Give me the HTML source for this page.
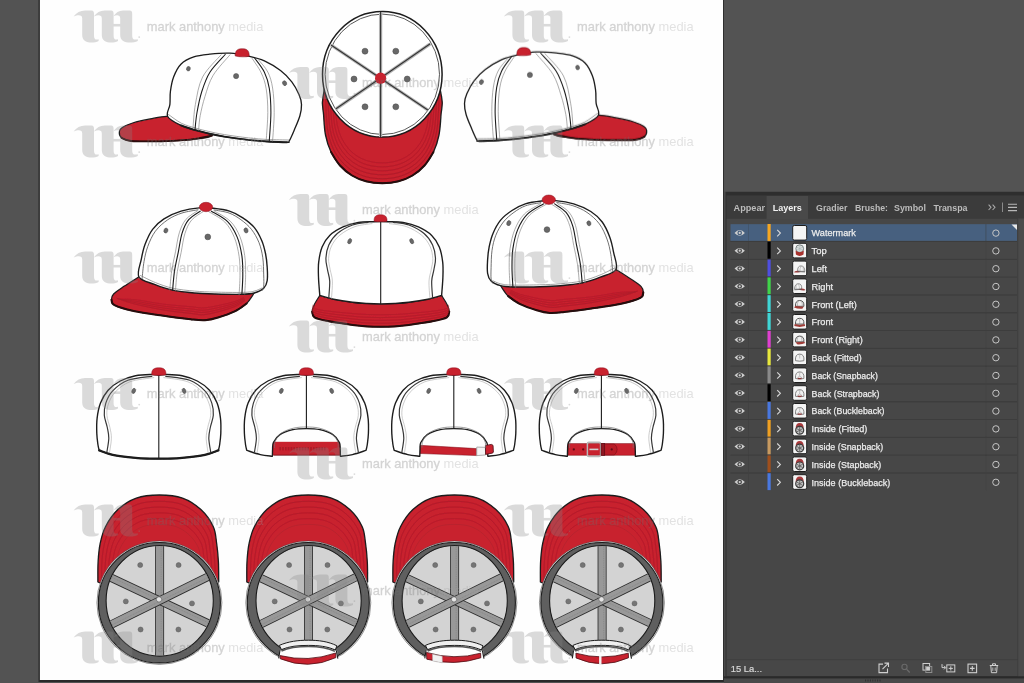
<!DOCTYPE html><html><head><meta charset="utf-8"><title>Hat template</title><style>html,body{margin:0;padding:0;}body{width:1024px;height:683px;overflow:hidden;background:#535353;position:relative;font-family:"Liberation Sans",sans-serif;}#art{position:absolute;left:40px;top:0;width:682.8px;height:680.3px;background:#fefefe;}#artb{position:absolute;left:39px;top:680px;width:685.5px;height:1.6px;background:#2a2a2a;}#artr{position:absolute;left:722.6px;top:0;width:1.6px;height:681.5px;background:#2e2e2e;}#artl{position:absolute;left:38.4px;top:0;width:1.7px;height:681.5px;background:#3d3d3d;}</style></head><body><div id="artl"></div><div id="art"></div><div id="artb"></div><div id="artr"></div><svg width="1024" height="683" viewBox="0 0 1024 683" style="position:absolute;left:0;top:0"><defs><g id="malogo" fill="#888888" transform="translate(0,0.7)"><path d="M-1.2,-10.2 C1.8,-14.5 6.4,-16.6 11.4,-16.2 L16.7,-16.2 C18.7,-16.2 19.2,-15 19.2,-12.5 L19.2,8.5 C19.2,12.3 20.5,13.6 23.8,12.6 L23.8,14.3 C18.2,17.2 7.4,16.6 7.4,8.5 L7.4,-8.5 C7.4,-12 3.4,-12 -1.2,-10.2 Z"/><path d="M19.0,-10.2 C22.0,-14.5 26.0,-16.6 31.0,-16.2 L36.3,-16.2 C38.3,-16.2 38.8,-15 38.8,-12.5 L38.8,8.5 C38.8,12.3 40.1,13.6 43.2,12.6 L43.2,14.3 C37.8,17.2 27.0,16.6 27.0,8.5 L27.0,-8.5 C27.0,-12 23.0,-12 19.0,-10.2 Z"/><path d="M38.4,-10.2 C41.4,-14.5 44.4,-16.6 49.4,-16.2 L54.9,-16.2 C56.9,-16.2 57.4,-15 57.4,-12.5 L57.4,8.5 C57.4,12.3 58.7,13.6 63.0,12.6 L63.0,14.3 C56.4,17.2 45.4,16.6 45.4,8.5 L45.4,-8.5 C45.4,-12 41.4,-12 38.4,-10.2 Z"/><rect x="38" y="-2.8" width="8.5" height="2.6"/><circle cx="64.4" cy="10.4" r="0.9"/></g><filter id="soft" x="-2%" y="-2%" width="104%" height="104%"><feGaussianBlur stdDeviation="0.5"/></filter></defs><g id="hats" filter="url(#soft)"><path d="M167.70,116.50 C162.75,116.15 156.15,117.82 150.30,118.90 C144.45,119.98 137.27,121.55 132.60,123.00 C127.93,124.45 124.52,126.13 122.30,127.60 C120.08,129.07 119.43,130.10 119.30,131.80 C119.17,133.50 119.57,136.27 121.50,137.80 C123.43,139.33 124.77,140.42 130.90,141.00 C137.03,141.58 148.37,141.53 158.30,141.30 C168.23,141.07 181.55,140.55 190.50,139.60 C199.45,138.65 211.25,137.87 212.00,135.60 C212.75,133.33 200.33,128.43 195.00,126.00 C189.67,123.57 184.55,122.58 180.00,121.00 C175.45,119.42 172.65,116.85 167.70,116.50 Z" fill="#c8202e" stroke="#1c1c1c" stroke-width="1.2" stroke-linejoin="round" stroke-linecap="round" /><path d="M121.50,137.80 C123.07,138.33 124.77,140.42 130.90,141.00 C137.03,141.58 148.37,141.53 158.30,141.30 C168.23,141.07 181.55,140.55 190.50,139.60 C199.45,138.65 208.42,136.27 212.00,135.60" fill="none" stroke="#2a0a0a" stroke-width="1.8" stroke-linejoin="round" stroke-linecap="round" /><path d="M167.70,116.50 C165.87,113.00 169.45,108.57 169.90,104.40 C170.35,100.23 169.78,96.07 170.40,91.50 C171.02,86.93 171.85,81.55 173.60,77.00 C175.35,72.45 177.53,67.55 180.90,64.20 C184.27,60.85 188.97,58.57 193.80,56.90 C198.63,55.23 203.87,54.82 209.90,54.20 C215.93,53.58 223.60,52.88 230.00,53.20 C236.40,53.52 242.57,54.82 248.30,56.10 C254.03,57.38 259.03,58.48 264.40,60.90 C269.77,63.32 275.93,67.10 280.50,70.60 C285.07,74.10 288.70,77.87 291.80,81.90 C294.90,85.93 297.48,91.05 299.10,94.80 C300.72,98.55 301.37,100.92 301.50,104.40 C301.63,107.88 301.12,111.40 299.90,115.70 C298.68,120.00 295.95,126.03 294.20,130.20 C292.45,134.37 290.60,138.68 289.40,140.70 C288.20,142.72 290.62,142.17 287.00,142.30 C283.38,142.43 274.15,141.90 267.70,141.50 C261.25,141.10 255.55,140.72 248.30,139.90 C241.05,139.08 230.92,137.68 224.20,136.60 C217.48,135.52 212.80,134.47 208.00,133.40 C203.20,132.33 199.92,131.53 195.40,130.20 C190.88,128.87 185.52,127.68 180.90,125.40 C176.28,123.12 169.53,120.00 167.70,116.50 Z" fill="#fff" stroke="#1c1c1c" stroke-width="1.32" stroke-linejoin="round" stroke-linecap="round" /><path d="M180.90,125.40 C183.32,126.20 190.88,128.87 195.40,130.20 C199.92,131.53 203.20,132.33 208.00,133.40 C212.80,134.47 217.48,135.52 224.20,136.60 C230.92,137.68 241.05,139.08 248.30,139.90 C255.55,140.72 261.25,141.10 267.70,141.50 C274.15,141.90 283.78,142.17 287.00,142.30" fill="none" stroke="#1c1c1c" stroke-width="1.92" stroke-linejoin="round" stroke-linecap="round" /><path d="M168.50,114.50 C170.67,115.97 176.92,121.02 181.50,123.30 C186.08,125.58 191.50,126.85 196.00,128.20 C200.50,129.55 203.75,130.33 208.50,131.40 C213.25,132.47 217.83,133.52 224.50,134.60 C231.17,135.68 241.25,137.08 248.50,137.90 C255.75,138.72 261.33,139.15 268.00,139.50 C274.67,139.85 285.08,139.92 288.50,140.00" fill="none" stroke="#808080" stroke-width="0.72" stroke-linejoin="round" stroke-linecap="round" /><path d="M225.20,54.50 C222.65,57.45 213.80,66.03 209.90,72.20 C206.00,78.37 203.95,84.78 201.80,91.50 C199.65,98.22 198.13,106.18 197.00,112.50 C195.87,118.82 195.33,126.58 195.00,129.40" fill="none" stroke="#1c1c1c" stroke-width="1.08" stroke-linejoin="round" stroke-linecap="round" /><path d="M221.10,54.80 C218.02,58.50 206.88,68.73 202.60,77.00 C198.32,85.27 197.00,95.93 195.40,104.40 C193.80,112.87 193.40,123.90 193.00,127.80" fill="none" stroke="#808080" stroke-width="0.66" stroke-linejoin="round" stroke-linecap="round" /><path d="M230.00,54.80 C227.18,58.23 217.27,68.47 213.10,75.40 C208.93,82.33 207.15,89.68 205.00,96.40 C202.85,103.12 201.27,110.07 200.20,115.70 C199.13,121.33 198.87,127.78 198.60,130.20" fill="none" stroke="#808080" stroke-width="0.66" stroke-linejoin="round" stroke-linecap="round" /><path d="M254.80,58.30 C256.40,60.62 261.98,67.20 264.40,72.20 C266.82,77.20 268.22,81.58 269.30,88.30 C270.38,95.02 270.90,103.77 270.90,112.50 C270.90,121.23 269.57,136.00 269.30,140.70" fill="none" stroke="#1c1c1c" stroke-width="1.08" stroke-linejoin="round" stroke-linecap="round" /><path d="M251.50,57.50 C253.12,60.05 258.75,67.58 261.20,72.80 C263.65,78.02 265.10,82.18 266.20,88.80 C267.30,95.42 267.80,103.90 267.80,112.50 C267.80,121.10 266.47,135.75 266.20,140.40" fill="none" stroke="#808080" stroke-width="0.66" stroke-linejoin="round" stroke-linecap="round" /><path d="M258.50,59.80 C260.05,61.83 265.45,67.30 267.80,72.00 C270.15,76.70 271.53,81.25 272.60,88.00 C273.67,94.75 274.20,103.67 274.20,112.50 C274.20,121.33 272.87,136.25 272.60,141.00" fill="none" stroke="#808080" stroke-width="0.66" stroke-linejoin="round" stroke-linecap="round" /><path d="M235.2,56 C235,50 238,48.7 242.2,48.7 C246.5,48.7 249.4,50 249.2,56.3 C246,57.2 239,57 235.2,56 Z" fill="#c8202e" stroke="#7a1018" stroke-width="0.5"/><ellipse cx="188.4" cy="68.7" rx="1.9" ry="2.3" fill="#686868" stroke="#484848" stroke-width="0.5" transform="rotate(15 188.4 68.7)"/><ellipse cx="236.1" cy="76.1" rx="2.6" ry="2.6" fill="#686868" stroke="#484848" stroke-width="0.5" transform="rotate(0 236.1 76.1)"/><ellipse cx="284.6" cy="83.2" rx="2.0" ry="2.5" fill="#686868" stroke="#484848" stroke-width="0.5" transform="rotate(-25 284.6 83.2)"/><g transform="translate(766.0,-1.2) scale(-1,1)"><path d="M167.70,116.50 C162.75,116.15 156.15,117.82 150.30,118.90 C144.45,119.98 137.27,121.55 132.60,123.00 C127.93,124.45 124.52,126.13 122.30,127.60 C120.08,129.07 119.43,130.10 119.30,131.80 C119.17,133.50 119.57,136.27 121.50,137.80 C123.43,139.33 124.77,140.42 130.90,141.00 C137.03,141.58 148.37,141.53 158.30,141.30 C168.23,141.07 181.55,140.55 190.50,139.60 C199.45,138.65 211.25,137.87 212.00,135.60 C212.75,133.33 200.33,128.43 195.00,126.00 C189.67,123.57 184.55,122.58 180.00,121.00 C175.45,119.42 172.65,116.85 167.70,116.50 Z" fill="#c8202e" stroke="#1c1c1c" stroke-width="1.2" stroke-linejoin="round" stroke-linecap="round" /><path d="M121.50,137.80 C123.07,138.33 124.77,140.42 130.90,141.00 C137.03,141.58 148.37,141.53 158.30,141.30 C168.23,141.07 181.55,140.55 190.50,139.60 C199.45,138.65 208.42,136.27 212.00,135.60" fill="none" stroke="#2a0a0a" stroke-width="1.8" stroke-linejoin="round" stroke-linecap="round" /><path d="M167.70,116.50 C165.87,113.00 169.45,108.57 169.90,104.40 C170.35,100.23 169.78,96.07 170.40,91.50 C171.02,86.93 171.85,81.55 173.60,77.00 C175.35,72.45 177.53,67.55 180.90,64.20 C184.27,60.85 188.97,58.57 193.80,56.90 C198.63,55.23 203.87,54.82 209.90,54.20 C215.93,53.58 223.60,52.88 230.00,53.20 C236.40,53.52 242.57,54.82 248.30,56.10 C254.03,57.38 259.03,58.48 264.40,60.90 C269.77,63.32 275.93,67.10 280.50,70.60 C285.07,74.10 288.70,77.87 291.80,81.90 C294.90,85.93 297.48,91.05 299.10,94.80 C300.72,98.55 301.37,100.92 301.50,104.40 C301.63,107.88 301.12,111.40 299.90,115.70 C298.68,120.00 295.95,126.03 294.20,130.20 C292.45,134.37 290.60,138.68 289.40,140.70 C288.20,142.72 290.62,142.17 287.00,142.30 C283.38,142.43 274.15,141.90 267.70,141.50 C261.25,141.10 255.55,140.72 248.30,139.90 C241.05,139.08 230.92,137.68 224.20,136.60 C217.48,135.52 212.80,134.47 208.00,133.40 C203.20,132.33 199.92,131.53 195.40,130.20 C190.88,128.87 185.52,127.68 180.90,125.40 C176.28,123.12 169.53,120.00 167.70,116.50 Z" fill="#fff" stroke="#1c1c1c" stroke-width="1.32" stroke-linejoin="round" stroke-linecap="round" /><path d="M180.90,125.40 C183.32,126.20 190.88,128.87 195.40,130.20 C199.92,131.53 203.20,132.33 208.00,133.40 C212.80,134.47 217.48,135.52 224.20,136.60 C230.92,137.68 241.05,139.08 248.30,139.90 C255.55,140.72 261.25,141.10 267.70,141.50 C274.15,141.90 283.78,142.17 287.00,142.30" fill="none" stroke="#1c1c1c" stroke-width="1.92" stroke-linejoin="round" stroke-linecap="round" /><path d="M168.50,114.50 C170.67,115.97 176.92,121.02 181.50,123.30 C186.08,125.58 191.50,126.85 196.00,128.20 C200.50,129.55 203.75,130.33 208.50,131.40 C213.25,132.47 217.83,133.52 224.50,134.60 C231.17,135.68 241.25,137.08 248.50,137.90 C255.75,138.72 261.33,139.15 268.00,139.50 C274.67,139.85 285.08,139.92 288.50,140.00" fill="none" stroke="#808080" stroke-width="0.72" stroke-linejoin="round" stroke-linecap="round" /><path d="M225.20,54.50 C222.65,57.45 213.80,66.03 209.90,72.20 C206.00,78.37 203.95,84.78 201.80,91.50 C199.65,98.22 198.13,106.18 197.00,112.50 C195.87,118.82 195.33,126.58 195.00,129.40" fill="none" stroke="#1c1c1c" stroke-width="1.08" stroke-linejoin="round" stroke-linecap="round" /><path d="M221.10,54.80 C218.02,58.50 206.88,68.73 202.60,77.00 C198.32,85.27 197.00,95.93 195.40,104.40 C193.80,112.87 193.40,123.90 193.00,127.80" fill="none" stroke="#808080" stroke-width="0.66" stroke-linejoin="round" stroke-linecap="round" /><path d="M230.00,54.80 C227.18,58.23 217.27,68.47 213.10,75.40 C208.93,82.33 207.15,89.68 205.00,96.40 C202.85,103.12 201.27,110.07 200.20,115.70 C199.13,121.33 198.87,127.78 198.60,130.20" fill="none" stroke="#808080" stroke-width="0.66" stroke-linejoin="round" stroke-linecap="round" /><path d="M254.80,58.30 C256.40,60.62 261.98,67.20 264.40,72.20 C266.82,77.20 268.22,81.58 269.30,88.30 C270.38,95.02 270.90,103.77 270.90,112.50 C270.90,121.23 269.57,136.00 269.30,140.70" fill="none" stroke="#1c1c1c" stroke-width="1.08" stroke-linejoin="round" stroke-linecap="round" /><path d="M251.50,57.50 C253.12,60.05 258.75,67.58 261.20,72.80 C263.65,78.02 265.10,82.18 266.20,88.80 C267.30,95.42 267.80,103.90 267.80,112.50 C267.80,121.10 266.47,135.75 266.20,140.40" fill="none" stroke="#808080" stroke-width="0.66" stroke-linejoin="round" stroke-linecap="round" /><path d="M258.50,59.80 C260.05,61.83 265.45,67.30 267.80,72.00 C270.15,76.70 271.53,81.25 272.60,88.00 C273.67,94.75 274.20,103.67 274.20,112.50 C274.20,121.33 272.87,136.25 272.60,141.00" fill="none" stroke="#808080" stroke-width="0.66" stroke-linejoin="round" stroke-linecap="round" /><path d="M235.2,56 C235,50 238,48.7 242.2,48.7 C246.5,48.7 249.4,50 249.2,56.3 C246,57.2 239,57 235.2,56 Z" fill="#c8202e" stroke="#7a1018" stroke-width="0.5"/><ellipse cx="188.4" cy="68.7" rx="1.9" ry="2.3" fill="#686868" stroke="#484848" stroke-width="0.5" transform="rotate(15 188.4 68.7)"/><ellipse cx="236.1" cy="76.1" rx="2.6" ry="2.6" fill="#686868" stroke="#484848" stroke-width="0.5" transform="rotate(0 236.1 76.1)"/><ellipse cx="284.6" cy="83.2" rx="2.0" ry="2.5" fill="#686868" stroke="#484848" stroke-width="0.5" transform="rotate(-25 284.6 83.2)"/></g><path d="M323.00,97.00 C321.27,104.50 323.18,108.67 323.60,115.00 C324.02,121.33 324.27,128.83 325.50,135.00 C326.73,141.17 328.58,146.92 331.00,152.00 C333.42,157.08 336.50,161.58 340.00,165.50 C343.50,169.42 347.67,172.87 352.00,175.50 C356.33,178.13 360.95,180.02 366.00,181.30 C371.05,182.58 376.88,183.20 382.30,183.20 C387.72,183.20 393.47,182.58 398.50,181.30 C403.53,180.02 408.17,178.13 412.50,175.50 C416.83,172.87 421.00,169.42 424.50,165.50 C428.00,161.58 431.08,157.08 433.50,152.00 C435.92,146.92 437.75,141.17 439.00,135.00 C440.25,128.83 440.57,121.33 441.00,115.00 C441.43,108.67 443.43,104.50 441.60,97.00 C439.77,89.50 439.93,76.17 430.00,70.00 C420.07,63.83 398.00,60.00 382.00,60.00 C366.00,60.00 343.83,63.83 334.00,70.00 C324.17,76.17 324.73,89.50 323.00,97.00 Z" fill="#c8202e" stroke="#1c1c1c" stroke-width="1.32" stroke-linejoin="round" stroke-linecap="round" /><path d="M331.00,152.00 C332.50,154.25 336.50,161.58 340.00,165.50 C343.50,169.42 347.67,172.87 352.00,175.50 C356.33,178.13 360.95,180.02 366.00,181.30 C371.05,182.58 376.88,183.20 382.30,183.20 C387.72,183.20 393.47,182.58 398.50,181.30 C403.53,180.02 408.17,178.13 412.50,175.50 C416.83,172.87 421.00,169.42 424.50,165.50 C428.00,161.58 432.00,154.25 433.50,152.00" fill="none" stroke="#250808" stroke-width="1.92" stroke-linejoin="round" stroke-linecap="round" /><path d="M325.67,96.41 C325.76,99.28 325.84,107.56 326.24,113.61 C326.64,119.65 326.88,126.82 328.06,132.70 C329.23,138.59 331.00,144.09 333.31,148.94 C335.62,153.79 338.56,158.09 341.90,161.83 C345.25,165.57 349.23,168.87 353.36,171.38 C357.50,173.90 361.91,175.70 366.73,176.92 C371.56,178.15 377.13,178.74 382.30,178.74 C387.47,178.74 392.96,178.15 397.77,176.92 C402.58,175.70 407.00,173.90 411.14,171.38 C415.28,168.87 419.26,165.57 422.60,161.83 C425.94,158.09 428.89,153.79 431.20,148.94 C433.50,144.09 435.25,138.59 436.45,132.70 C437.64,126.82 437.94,119.65 438.36,113.61 C438.77,107.56 438.84,99.28 438.93,96.41" fill="none" stroke="#a01a26" stroke-width="0.72" stroke-linejoin="round" stroke-linecap="round" /><path d="M328.04,95.89 C328.13,98.64 328.21,106.57 328.59,112.37 C328.97,118.16 329.20,125.02 330.33,130.66 C331.46,136.31 333.15,141.57 335.36,146.22 C337.57,150.87 340.39,154.99 343.60,158.57 C346.80,162.16 350.61,165.31 354.58,167.72 C358.54,170.13 362.76,171.86 367.39,173.03 C372.01,174.20 377.34,174.77 382.30,174.77 C387.26,174.77 392.52,174.20 397.12,173.03 C401.73,171.86 405.97,170.13 409.93,167.72 C413.90,165.31 417.71,162.16 420.91,158.57 C424.12,154.99 426.94,150.87 429.15,146.22 C431.36,141.57 433.04,136.31 434.18,130.66 C435.32,125.02 435.61,118.16 436.01,112.37 C436.41,106.57 436.47,98.64 436.56,95.89" fill="none" stroke="#a51b27" stroke-width="0.72" stroke-linejoin="round" stroke-linecap="round" /><path d="M330.41,95.38 C330.50,98.00 330.57,105.58 330.94,111.12 C331.30,116.67 331.52,123.23 332.60,128.62 C333.68,134.02 335.30,139.05 337.41,143.50 C339.53,147.95 342.23,151.89 345.29,155.31 C348.35,158.74 352.00,161.76 355.79,164.06 C359.58,166.37 363.62,168.01 368.04,169.14 C372.46,170.26 377.56,170.80 382.30,170.80 C387.04,170.80 392.07,170.26 396.48,169.14 C400.88,168.01 404.93,166.37 408.73,164.06 C412.52,161.76 416.16,158.74 419.23,155.31 C422.29,151.89 424.99,147.95 427.10,143.50 C429.21,139.05 430.82,134.02 431.91,128.62 C433.01,123.23 433.28,116.67 433.66,111.12 C434.04,105.58 434.10,98.00 434.19,95.38" fill="none" stroke="#a81c28" stroke-width="0.72" stroke-linejoin="round" stroke-linecap="round" /><path d="M332.78,94.86 C332.87,97.36 332.94,104.60 333.29,109.88 C333.63,115.17 333.84,121.44 334.87,126.59 C335.90,131.73 337.45,136.54 339.46,140.78 C341.48,145.02 344.06,148.78 346.98,152.05 C349.90,155.32 353.38,158.20 357.00,160.40 C360.62,162.60 364.47,164.17 368.69,165.25 C372.91,166.32 377.78,166.83 382.30,166.83 C386.82,166.83 391.62,166.32 395.83,165.25 C400.03,164.17 403.90,162.60 407.52,160.40 C411.14,158.20 414.61,155.32 417.54,152.05 C420.46,148.78 423.03,145.02 425.05,140.78 C427.07,136.54 428.60,131.73 429.64,126.59 C430.69,121.44 430.95,115.17 431.31,109.88 C431.68,104.60 431.73,97.36 431.82,94.86" fill="none" stroke="#ab1d29" stroke-width="0.72" stroke-linejoin="round" stroke-linecap="round" /><path d="M335.16,94.34 C335.24,96.72 335.30,103.61 335.63,108.64 C335.96,113.68 336.16,119.64 337.14,124.55 C338.12,129.45 339.60,134.02 341.52,138.06 C343.44,142.10 345.89,145.68 348.67,148.79 C351.45,151.91 354.77,154.65 358.21,156.74 C361.66,158.84 365.33,160.33 369.34,161.35 C373.36,162.37 377.99,162.86 382.30,162.86 C386.61,162.86 391.18,162.37 395.18,161.35 C399.18,160.33 402.86,158.84 406.31,156.74 C409.75,154.65 413.07,151.91 415.85,148.79 C418.63,145.68 421.08,142.10 423.00,138.06 C424.93,134.02 426.38,129.45 427.38,124.55 C428.37,119.64 428.62,113.68 428.97,108.64 C429.31,103.61 429.36,96.72 429.44,94.34" fill="none" stroke="#ae1e2a" stroke-width="0.72" stroke-linejoin="round" stroke-linecap="round" /><ellipse cx="382.3" cy="74.3" rx="59.8" ry="62.8" fill="#fff" stroke="#1c1c1c" stroke-width="1.5"/><ellipse cx="382.3" cy="74.3" rx="57.199999999999996" ry="60.199999999999996" fill="none" stroke="#444" stroke-width="0.9"/><line x1="380.6" y1="12" x2="380.6" y2="137" stroke="#b4b4b4" stroke-width="3.3"/><line x1="380.6" y1="12" x2="380.6" y2="137" stroke="#333" stroke-width="1.1"/><line x1="331" y1="45" x2="427.8" y2="110" stroke="#b4b4b4" stroke-width="3.3"/><line x1="331" y1="45" x2="427.8" y2="110" stroke="#333" stroke-width="1.1"/><line x1="430.2" y1="43.8" x2="336" y2="108.8" stroke="#b4b4b4" stroke-width="3.3"/><line x1="430.2" y1="43.8" x2="336" y2="108.8" stroke="#333" stroke-width="1.1"/><ellipse cx="365" cy="51.2" rx="3" ry="3" fill="#686868" stroke="#484848" stroke-width="0.5" transform="rotate(0 365 51.2)"/><ellipse cx="395.8" cy="51.2" rx="3" ry="3" fill="#686868" stroke="#484848" stroke-width="0.5" transform="rotate(0 395.8 51.2)"/><ellipse cx="354" cy="79" rx="3" ry="3" fill="#686868" stroke="#484848" stroke-width="0.5" transform="rotate(0 354 79)"/><ellipse cx="407.2" cy="79" rx="3" ry="3" fill="#686868" stroke="#484848" stroke-width="0.5" transform="rotate(0 407.2 79)"/><ellipse cx="365" cy="106.8" rx="3" ry="3" fill="#686868" stroke="#484848" stroke-width="0.5" transform="rotate(0 365 106.8)"/><ellipse cx="395.8" cy="106.8" rx="3" ry="3" fill="#686868" stroke="#484848" stroke-width="0.5" transform="rotate(0 395.8 106.8)"/><circle cx="380.6" cy="78.2" r="5.6" fill="#c8202e"/><path d="M138.90,276.80 C136.42,278.38 128.22,283.43 124.00,286.30 C119.78,289.17 115.68,291.77 113.60,294.00 C111.52,296.23 111.35,297.83 111.50,299.70 C111.65,301.57 110.83,303.32 114.50,305.20 C118.17,307.08 125.57,309.27 133.50,311.00 C141.43,312.73 152.58,314.22 162.10,315.60 C171.62,316.98 183.45,318.53 190.60,319.30 C197.75,320.07 200.42,320.50 205.00,320.20 C209.58,319.90 213.07,319.02 218.10,317.50 C223.13,315.98 230.45,313.43 235.20,311.10 C239.95,308.77 243.43,306.52 246.60,303.50 C249.77,300.48 252.93,294.75 254.20,293.00 L215,286 L172,280 Z" fill="#c8202e" stroke="#1c1c1c" stroke-width="1.2" stroke-linejoin="round" stroke-linecap="round" /><path d="M111.50,299.70 C112.00,300.62 110.83,303.32 114.50,305.20 C118.17,307.08 125.57,309.27 133.50,311.00 C141.43,312.73 152.58,314.22 162.10,315.60 C171.62,316.98 183.45,318.53 190.60,319.30 C197.75,320.07 200.42,320.50 205.00,320.20 C209.58,319.90 213.07,319.02 218.10,317.50 C223.13,315.98 230.45,313.43 235.20,311.10 C239.95,308.77 244.70,304.77 246.60,303.50" fill="none" stroke="#250808" stroke-width="2.04" stroke-linejoin="round" stroke-linecap="round" /><path d="M117.32,298.44 C120.27,299.37 127.39,302.12 135.00,304.02 C142.61,305.92 153.67,308.29 163.00,309.86 C172.33,311.43 183.83,312.66 191.00,313.42 C198.17,314.18 199.17,315.39 206.00,314.42 C212.83,313.45 225.57,309.87 232.00,307.58 C238.43,305.29 242.47,301.83 244.56,300.68" fill="none" stroke="#a81c28" stroke-width="0.72" stroke-linejoin="round" stroke-linecap="round" /><path d="M118.28,298.76 C121.07,299.40 127.55,301.05 135.00,302.58 C142.45,304.11 153.67,306.51 163.00,307.94 C172.33,309.37 183.83,310.47 191.00,311.18 C198.17,311.89 199.17,313.07 206.00,312.18 C212.83,311.29 225.63,307.90 232.00,305.82 C238.37,303.74 242.20,300.74 244.24,299.72" fill="none" stroke="#aa1d29" stroke-width="0.72" stroke-linejoin="round" stroke-linecap="round" /><path d="M119.24,299.08 C121.87,299.42 127.71,299.98 135.00,301.14 C142.29,302.30 153.67,304.72 163.00,306.02 C172.33,307.32 183.83,308.29 191.00,308.94 C198.17,309.59 199.17,310.75 206.00,309.94 C212.83,309.13 225.68,305.92 232.00,304.06 C238.32,302.20 241.93,299.64 243.92,298.76" fill="none" stroke="#ad1e2a" stroke-width="0.72" stroke-linejoin="round" stroke-linecap="round" /><path d="M120.20,299.40 C122.67,299.45 127.87,298.92 135.00,299.70 C142.13,300.48 153.67,302.93 163.00,304.10 C172.33,305.27 183.83,306.10 191.00,306.70 C198.17,307.30 199.17,308.43 206.00,307.70 C212.83,306.97 225.73,303.95 232.00,302.30 C238.27,300.65 241.67,298.55 243.60,297.80" fill="none" stroke="#b01f2b" stroke-width="0.72" stroke-linejoin="round" stroke-linecap="round" /><path d="M138.90,276.80 C136.68,272.68 140.18,265.08 141.20,259.70 C142.22,254.32 143.10,249.57 145.00,244.50 C146.90,239.43 149.43,233.58 152.60,229.30 C155.77,225.02 159.25,221.82 164.00,218.80 C168.75,215.78 175.23,213.02 181.10,211.20 C186.97,209.38 193.83,208.38 199.20,207.90 C204.57,207.42 208.25,207.75 213.30,208.30 C218.35,208.85 224.58,209.62 229.50,211.20 C234.42,212.78 238.68,215.10 242.80,217.80 C246.92,220.50 251.03,223.58 254.20,227.40 C257.37,231.22 259.90,236.27 261.80,240.70 C263.70,245.13 264.70,249.57 265.60,254.00 C266.50,258.43 266.93,262.87 267.20,267.30 C267.47,271.73 267.78,277.10 267.20,280.60 C266.62,284.10 265.87,286.23 263.70,288.30 C261.53,290.37 257.83,292.00 254.20,293.00 C250.57,294.00 248.43,294.13 241.90,294.30 C235.37,294.47 222.92,294.22 215.00,294.00 C207.08,293.78 201.47,293.63 194.40,293.00 C187.33,292.37 179.25,291.63 172.60,290.20 C165.95,288.77 160.12,286.63 154.50,284.40 C148.88,282.17 141.12,280.92 138.90,276.80 Z" fill="#fff" stroke="#1c1c1c" stroke-width="1.38" stroke-linejoin="round" stroke-linecap="round" /><path d="M198.00,209.80 C195.33,210.33 187.03,211.35 182.00,213.00 C176.97,214.65 172.23,216.67 167.80,219.70 C163.37,222.73 158.73,226.75 155.40,231.20 C152.07,235.65 149.70,241.33 147.80,246.40 C145.90,251.47 144.95,256.22 144.00,261.60 C143.05,266.98 142.42,275.85 142.10,278.70" fill="none" stroke="#555" stroke-width="0.84" stroke-linejoin="round" stroke-linecap="round" /><path d="M214.00,210.00 C216.50,210.50 224.52,211.38 229.00,213.00 C233.48,214.62 237.17,216.98 240.90,219.70 C244.63,222.42 248.38,225.48 251.40,229.30 C254.42,233.12 257.10,237.85 259.00,242.60 C260.90,247.35 262.02,252.42 262.80,257.80 C263.58,263.18 263.55,270.15 263.70,274.90 C263.85,279.65 263.98,283.70 263.70,286.30 C263.42,288.90 262.28,289.80 262.00,290.50" fill="none" stroke="#555" stroke-width="0.84" stroke-linejoin="round" stroke-linecap="round" /><path d="M140.50,275.50 C143.00,276.68 150.08,280.47 155.50,282.60 C160.92,284.73 166.48,286.88 173.00,288.30 C179.52,289.72 187.60,290.47 194.60,291.10 C201.60,291.73 207.12,291.88 215.00,292.10 C222.88,292.32 235.40,292.55 241.90,292.40 C248.40,292.25 250.65,291.93 254.00,291.20 C257.35,290.47 260.67,288.53 262.00,288.00" fill="none" stroke="#808080" stroke-width="0.72" stroke-linejoin="round" stroke-linecap="round" /><path d="M200.20,211.20 C198.28,212.62 191.72,216.05 188.70,219.70 C185.68,223.35 183.83,227.70 182.10,233.10 C180.37,238.50 179.57,245.77 178.30,252.10 C177.03,258.43 175.45,264.75 174.50,271.10 C173.55,277.45 172.92,287.02 172.60,290.20" fill="none" stroke="#1c1c1c" stroke-width="1.14" stroke-linejoin="round" stroke-linecap="round" /><path d="M197.40,210.90 C195.48,212.32 188.92,215.75 185.90,219.40 C182.88,223.05 181.03,227.40 179.30,232.80 C177.57,238.20 176.77,245.47 175.50,251.80 C174.23,258.13 172.65,264.45 171.70,270.80 C170.75,277.15 170.12,286.72 169.80,289.90" fill="none" stroke="#808080" stroke-width="0.66" stroke-linejoin="round" stroke-linecap="round" /><path d="M203.00,211.70 C201.08,213.12 194.52,216.55 191.50,220.20 C188.48,223.85 186.63,228.20 184.90,233.60 C183.17,239.00 182.37,246.27 181.10,252.60 C179.83,258.93 178.25,265.25 177.30,271.60 C176.35,277.95 175.72,287.52 175.40,290.70" fill="none" stroke="#808080" stroke-width="0.66" stroke-linejoin="round" stroke-linecap="round" /><path d="M211.40,211.20 C214.10,212.93 223.32,217.32 227.60,221.60 C231.88,225.88 234.72,231.18 237.10,236.90 C239.48,242.62 240.95,249.57 241.90,255.90 C242.85,262.23 242.80,268.50 242.80,274.90 C242.80,281.30 242.05,291.07 241.90,294.30" fill="none" stroke="#1c1c1c" stroke-width="1.14" stroke-linejoin="round" stroke-linecap="round" /><path d="M208.60,211.60 C211.30,213.33 220.52,217.72 224.80,222.00 C229.08,226.28 231.92,231.58 234.30,237.30 C236.68,243.02 238.15,249.97 239.10,256.30 C240.05,262.63 240.00,268.90 240.00,275.30 C240.00,281.70 239.25,291.47 239.10,294.70" fill="none" stroke="#808080" stroke-width="0.66" stroke-linejoin="round" stroke-linecap="round" /><path d="M214.20,210.90 C216.90,212.63 226.12,217.02 230.40,221.30 C234.68,225.58 237.52,230.88 239.90,236.60 C242.28,242.32 243.75,249.27 244.70,255.60 C245.65,261.93 245.60,268.20 245.60,274.60 C245.60,281.00 244.85,290.77 244.70,294.00" fill="none" stroke="#808080" stroke-width="0.66" stroke-linejoin="round" stroke-linecap="round" /><ellipse cx="206" cy="207" rx="6.7" ry="4.7" fill="#c8202e" stroke="#8a1420" stroke-width="0.5"/><ellipse cx="165.9" cy="230.6" rx="2.0" ry="2.5" fill="#686868" stroke="#484848" stroke-width="0.5" transform="rotate(20 165.9 230.6)"/><ellipse cx="207.8" cy="236.9" rx="2.9" ry="2.9" fill="#686868" stroke="#484848" stroke-width="0.5" transform="rotate(0 207.8 236.9)"/><ellipse cx="246" cy="230.4" rx="2.0" ry="2.6" fill="#686868" stroke="#484848" stroke-width="0.5" transform="rotate(-20 246 230.4)"/><g transform="translate(754.8,-7.3) scale(-1,1)"><path d="M138.90,276.80 C136.42,278.38 128.22,283.43 124.00,286.30 C119.78,289.17 115.68,291.77 113.60,294.00 C111.52,296.23 111.35,297.83 111.50,299.70 C111.65,301.57 110.83,303.32 114.50,305.20 C118.17,307.08 125.57,309.27 133.50,311.00 C141.43,312.73 152.58,314.22 162.10,315.60 C171.62,316.98 183.45,318.53 190.60,319.30 C197.75,320.07 200.42,320.50 205.00,320.20 C209.58,319.90 213.07,319.02 218.10,317.50 C223.13,315.98 230.45,313.43 235.20,311.10 C239.95,308.77 243.43,306.52 246.60,303.50 C249.77,300.48 252.93,294.75 254.20,293.00 L215,286 L172,280 Z" fill="#c8202e" stroke="#1c1c1c" stroke-width="1.2" stroke-linejoin="round" stroke-linecap="round" /><path d="M111.50,299.70 C112.00,300.62 110.83,303.32 114.50,305.20 C118.17,307.08 125.57,309.27 133.50,311.00 C141.43,312.73 152.58,314.22 162.10,315.60 C171.62,316.98 183.45,318.53 190.60,319.30 C197.75,320.07 200.42,320.50 205.00,320.20 C209.58,319.90 213.07,319.02 218.10,317.50 C223.13,315.98 230.45,313.43 235.20,311.10 C239.95,308.77 244.70,304.77 246.60,303.50" fill="none" stroke="#250808" stroke-width="2.04" stroke-linejoin="round" stroke-linecap="round" /><path d="M117.32,298.44 C120.27,299.37 127.39,302.12 135.00,304.02 C142.61,305.92 153.67,308.29 163.00,309.86 C172.33,311.43 183.83,312.66 191.00,313.42 C198.17,314.18 199.17,315.39 206.00,314.42 C212.83,313.45 225.57,309.87 232.00,307.58 C238.43,305.29 242.47,301.83 244.56,300.68" fill="none" stroke="#a81c28" stroke-width="0.72" stroke-linejoin="round" stroke-linecap="round" /><path d="M118.28,298.76 C121.07,299.40 127.55,301.05 135.00,302.58 C142.45,304.11 153.67,306.51 163.00,307.94 C172.33,309.37 183.83,310.47 191.00,311.18 C198.17,311.89 199.17,313.07 206.00,312.18 C212.83,311.29 225.63,307.90 232.00,305.82 C238.37,303.74 242.20,300.74 244.24,299.72" fill="none" stroke="#aa1d29" stroke-width="0.72" stroke-linejoin="round" stroke-linecap="round" /><path d="M119.24,299.08 C121.87,299.42 127.71,299.98 135.00,301.14 C142.29,302.30 153.67,304.72 163.00,306.02 C172.33,307.32 183.83,308.29 191.00,308.94 C198.17,309.59 199.17,310.75 206.00,309.94 C212.83,309.13 225.68,305.92 232.00,304.06 C238.32,302.20 241.93,299.64 243.92,298.76" fill="none" stroke="#ad1e2a" stroke-width="0.72" stroke-linejoin="round" stroke-linecap="round" /><path d="M120.20,299.40 C122.67,299.45 127.87,298.92 135.00,299.70 C142.13,300.48 153.67,302.93 163.00,304.10 C172.33,305.27 183.83,306.10 191.00,306.70 C198.17,307.30 199.17,308.43 206.00,307.70 C212.83,306.97 225.73,303.95 232.00,302.30 C238.27,300.65 241.67,298.55 243.60,297.80" fill="none" stroke="#b01f2b" stroke-width="0.72" stroke-linejoin="round" stroke-linecap="round" /><path d="M138.90,276.80 C136.68,272.68 140.18,265.08 141.20,259.70 C142.22,254.32 143.10,249.57 145.00,244.50 C146.90,239.43 149.43,233.58 152.60,229.30 C155.77,225.02 159.25,221.82 164.00,218.80 C168.75,215.78 175.23,213.02 181.10,211.20 C186.97,209.38 193.83,208.38 199.20,207.90 C204.57,207.42 208.25,207.75 213.30,208.30 C218.35,208.85 224.58,209.62 229.50,211.20 C234.42,212.78 238.68,215.10 242.80,217.80 C246.92,220.50 251.03,223.58 254.20,227.40 C257.37,231.22 259.90,236.27 261.80,240.70 C263.70,245.13 264.70,249.57 265.60,254.00 C266.50,258.43 266.93,262.87 267.20,267.30 C267.47,271.73 267.78,277.10 267.20,280.60 C266.62,284.10 265.87,286.23 263.70,288.30 C261.53,290.37 257.83,292.00 254.20,293.00 C250.57,294.00 248.43,294.13 241.90,294.30 C235.37,294.47 222.92,294.22 215.00,294.00 C207.08,293.78 201.47,293.63 194.40,293.00 C187.33,292.37 179.25,291.63 172.60,290.20 C165.95,288.77 160.12,286.63 154.50,284.40 C148.88,282.17 141.12,280.92 138.90,276.80 Z" fill="#fff" stroke="#1c1c1c" stroke-width="1.38" stroke-linejoin="round" stroke-linecap="round" /><path d="M198.00,209.80 C195.33,210.33 187.03,211.35 182.00,213.00 C176.97,214.65 172.23,216.67 167.80,219.70 C163.37,222.73 158.73,226.75 155.40,231.20 C152.07,235.65 149.70,241.33 147.80,246.40 C145.90,251.47 144.95,256.22 144.00,261.60 C143.05,266.98 142.42,275.85 142.10,278.70" fill="none" stroke="#555" stroke-width="0.84" stroke-linejoin="round" stroke-linecap="round" /><path d="M214.00,210.00 C216.50,210.50 224.52,211.38 229.00,213.00 C233.48,214.62 237.17,216.98 240.90,219.70 C244.63,222.42 248.38,225.48 251.40,229.30 C254.42,233.12 257.10,237.85 259.00,242.60 C260.90,247.35 262.02,252.42 262.80,257.80 C263.58,263.18 263.55,270.15 263.70,274.90 C263.85,279.65 263.98,283.70 263.70,286.30 C263.42,288.90 262.28,289.80 262.00,290.50" fill="none" stroke="#555" stroke-width="0.84" stroke-linejoin="round" stroke-linecap="round" /><path d="M140.50,275.50 C143.00,276.68 150.08,280.47 155.50,282.60 C160.92,284.73 166.48,286.88 173.00,288.30 C179.52,289.72 187.60,290.47 194.60,291.10 C201.60,291.73 207.12,291.88 215.00,292.10 C222.88,292.32 235.40,292.55 241.90,292.40 C248.40,292.25 250.65,291.93 254.00,291.20 C257.35,290.47 260.67,288.53 262.00,288.00" fill="none" stroke="#808080" stroke-width="0.72" stroke-linejoin="round" stroke-linecap="round" /><path d="M200.20,211.20 C198.28,212.62 191.72,216.05 188.70,219.70 C185.68,223.35 183.83,227.70 182.10,233.10 C180.37,238.50 179.57,245.77 178.30,252.10 C177.03,258.43 175.45,264.75 174.50,271.10 C173.55,277.45 172.92,287.02 172.60,290.20" fill="none" stroke="#1c1c1c" stroke-width="1.14" stroke-linejoin="round" stroke-linecap="round" /><path d="M197.40,210.90 C195.48,212.32 188.92,215.75 185.90,219.40 C182.88,223.05 181.03,227.40 179.30,232.80 C177.57,238.20 176.77,245.47 175.50,251.80 C174.23,258.13 172.65,264.45 171.70,270.80 C170.75,277.15 170.12,286.72 169.80,289.90" fill="none" stroke="#808080" stroke-width="0.66" stroke-linejoin="round" stroke-linecap="round" /><path d="M203.00,211.70 C201.08,213.12 194.52,216.55 191.50,220.20 C188.48,223.85 186.63,228.20 184.90,233.60 C183.17,239.00 182.37,246.27 181.10,252.60 C179.83,258.93 178.25,265.25 177.30,271.60 C176.35,277.95 175.72,287.52 175.40,290.70" fill="none" stroke="#808080" stroke-width="0.66" stroke-linejoin="round" stroke-linecap="round" /><path d="M211.40,211.20 C214.10,212.93 223.32,217.32 227.60,221.60 C231.88,225.88 234.72,231.18 237.10,236.90 C239.48,242.62 240.95,249.57 241.90,255.90 C242.85,262.23 242.80,268.50 242.80,274.90 C242.80,281.30 242.05,291.07 241.90,294.30" fill="none" stroke="#1c1c1c" stroke-width="1.14" stroke-linejoin="round" stroke-linecap="round" /><path d="M208.60,211.60 C211.30,213.33 220.52,217.72 224.80,222.00 C229.08,226.28 231.92,231.58 234.30,237.30 C236.68,243.02 238.15,249.97 239.10,256.30 C240.05,262.63 240.00,268.90 240.00,275.30 C240.00,281.70 239.25,291.47 239.10,294.70" fill="none" stroke="#808080" stroke-width="0.66" stroke-linejoin="round" stroke-linecap="round" /><path d="M214.20,210.90 C216.90,212.63 226.12,217.02 230.40,221.30 C234.68,225.58 237.52,230.88 239.90,236.60 C242.28,242.32 243.75,249.27 244.70,255.60 C245.65,261.93 245.60,268.20 245.60,274.60 C245.60,281.00 244.85,290.77 244.70,294.00" fill="none" stroke="#808080" stroke-width="0.66" stroke-linejoin="round" stroke-linecap="round" /><ellipse cx="206" cy="207" rx="6.7" ry="4.7" fill="#c8202e" stroke="#8a1420" stroke-width="0.5"/><ellipse cx="165.9" cy="230.6" rx="2.0" ry="2.5" fill="#686868" stroke="#484848" stroke-width="0.5" transform="rotate(20 165.9 230.6)"/><ellipse cx="207.8" cy="236.9" rx="2.9" ry="2.9" fill="#686868" stroke="#484848" stroke-width="0.5" transform="rotate(0 207.8 236.9)"/><ellipse cx="246" cy="230.4" rx="2.0" ry="2.6" fill="#686868" stroke="#484848" stroke-width="0.5" transform="rotate(-20 246 230.4)"/></g><path d="M319.80,295.40 C318.85,296.98 315.37,302.20 314.10,304.90 C312.83,307.60 312.13,309.53 312.20,311.60 C312.27,313.67 311.90,315.72 314.50,317.30 C317.10,318.88 321.45,319.82 327.80,321.10 C334.15,322.38 346.07,324.12 352.60,325.00 C359.13,325.88 362.32,326.10 367.00,326.40 C371.68,326.70 376.13,326.80 380.70,326.80 C385.27,326.80 389.72,326.70 394.40,326.40 C399.08,326.10 402.27,325.88 408.80,325.00 C415.33,324.12 427.25,322.38 433.60,321.10 C439.95,319.82 444.30,318.88 446.90,317.30 C449.50,315.72 449.13,313.67 449.20,311.60 C449.27,309.53 448.57,307.60 447.30,304.90 C446.03,302.20 442.55,296.98 441.60,295.40 C439.32,296.03 433.37,298.05 427.90,299.20 C422.43,300.35 414.38,301.58 408.80,302.30 C403.22,303.02 399.08,303.23 394.40,303.50 C389.72,303.77 385.27,303.90 380.70,303.90 C376.13,303.90 371.68,303.77 367.00,303.50 C362.32,303.23 358.18,303.02 352.60,302.30 C347.02,301.58 338.97,300.35 333.50,299.20 C328.03,298.05 322.08,296.03 319.80,295.40 Z" fill="#c8202e" stroke="#1c1c1c" stroke-width="1.2" stroke-linejoin="round" stroke-linecap="round" /><path d="M312.20,311.60 C312.58,312.55 311.90,315.72 314.50,317.30 C317.10,318.88 321.45,319.82 327.80,321.10 C334.15,322.38 346.07,324.12 352.60,325.00 C359.13,325.88 362.32,326.10 367.00,326.40 C371.68,326.70 376.13,326.80 380.70,326.80 C385.27,326.80 389.72,326.70 394.40,326.40 C399.08,326.10 402.27,325.88 408.80,325.00 C415.33,324.12 427.25,322.38 433.60,321.10 C439.95,319.82 444.30,318.88 446.90,317.30 C449.50,315.72 448.82,312.55 449.20,311.60" fill="none" stroke="#250808" stroke-width="2.04" stroke-linejoin="round" stroke-linecap="round" /><path d="M312.47,309.72 C312.86,310.57 312.18,313.39 314.76,314.80 C317.35,316.21 321.69,317.04 328.01,318.18 C334.34,319.32 346.21,320.86 352.71,321.65 C359.22,322.44 362.39,322.63 367.05,322.90 C371.72,323.16 376.15,323.25 380.70,323.25 C385.25,323.25 389.68,323.16 394.35,322.90 C399.01,322.63 402.18,322.44 408.69,321.65 C415.19,320.86 427.06,319.32 433.39,318.18 C439.71,317.04 444.05,316.21 446.64,314.80 C449.22,313.39 448.54,310.57 448.93,309.72" fill="none" stroke="#a81c28" stroke-width="0.72" stroke-linejoin="round" stroke-linecap="round" /><path d="M312.69,308.22 C313.07,308.99 312.40,311.52 314.98,312.79 C317.56,314.06 321.88,314.81 328.18,315.84 C334.49,316.87 346.32,318.26 352.80,318.97 C359.29,319.68 362.45,319.85 367.10,320.09 C371.75,320.33 376.17,320.41 380.70,320.41 C385.23,320.41 389.65,320.33 394.30,320.09 C398.95,319.85 402.11,319.68 408.60,318.97 C415.08,318.26 426.91,316.87 433.22,315.84 C439.52,314.81 443.84,314.06 446.42,312.79 C449.00,311.52 448.33,308.99 448.71,308.22" fill="none" stroke="#aa1d29" stroke-width="0.72" stroke-linejoin="round" stroke-linecap="round" /><path d="M312.91,306.72 C313.29,307.40 312.62,309.66 315.19,310.79 C317.76,311.92 322.07,312.59 328.35,313.51 C334.63,314.42 346.43,315.66 352.89,316.29 C359.36,316.92 362.51,317.08 367.14,317.29 C371.78,317.50 376.18,317.58 380.70,317.58 C385.22,317.58 389.62,317.50 394.26,317.29 C398.89,317.08 402.04,316.92 408.51,316.29 C414.97,315.66 426.77,314.42 433.05,313.51 C439.33,312.59 443.64,311.92 446.21,310.79 C448.78,309.66 448.11,307.40 448.49,306.72" fill="none" stroke="#ad1e2a" stroke-width="0.72" stroke-linejoin="round" stroke-linecap="round" /><path d="M313.13,305.22 C313.51,305.82 312.84,307.80 315.40,308.79 C317.96,309.78 322.26,310.37 328.52,311.17 C334.78,311.97 346.54,313.06 352.98,313.61 C359.43,314.16 362.57,314.30 367.19,314.49 C371.81,314.67 376.20,314.74 380.70,314.74 C385.20,314.74 389.59,314.67 394.21,314.49 C398.83,314.30 401.97,314.16 408.42,313.61 C414.86,313.06 426.62,311.97 432.88,311.17 C439.14,310.37 443.44,309.78 446.00,308.79 C448.56,307.80 447.89,305.82 448.27,305.22" fill="none" stroke="#b01f2b" stroke-width="0.72" stroke-linejoin="round" stroke-linecap="round" /><path d="M319.80,295.40 C319.58,292.38 318.68,282.85 318.50,277.30 C318.32,271.75 318.10,267.17 318.70,262.10 C319.30,257.03 320.27,251.35 322.10,246.90 C323.93,242.45 326.22,238.73 329.70,235.40 C333.18,232.07 338.23,229.05 343.00,226.90 C347.77,224.75 353.22,223.37 358.30,222.50 C363.38,221.63 369.77,221.87 373.50,221.70 C377.23,221.53 378.30,221.50 380.70,221.50 C383.10,221.50 384.17,221.53 387.90,221.70 C391.63,221.87 398.02,221.63 403.10,222.50 C408.18,223.37 413.63,224.75 418.40,226.90 C423.17,229.05 428.22,232.07 431.70,235.40 C435.18,238.73 437.47,242.45 439.30,246.90 C441.13,251.35 442.10,257.03 442.70,262.10 C443.30,267.17 443.08,271.75 442.90,277.30 C442.72,282.85 441.82,292.38 441.60,295.40 C439.32,296.03 433.37,298.05 427.90,299.20 C422.43,300.35 414.38,301.58 408.80,302.30 C403.22,303.02 399.08,303.23 394.40,303.50 C389.72,303.77 385.27,303.90 380.70,303.90 C376.13,303.90 371.68,303.77 367.00,303.50 C362.32,303.23 358.18,303.02 352.60,302.30 C347.02,301.58 338.97,300.35 333.50,299.20 C328.03,298.05 322.08,296.03 319.80,295.40 Z" fill="#fff" stroke="#1c1c1c" stroke-width="1.38" stroke-linejoin="round" stroke-linecap="round" /><path d="M368.00,222.30 C365.43,222.75 357.72,223.13 352.60,225.00 C347.48,226.87 341.27,230.17 337.30,233.50 C333.33,236.83 330.70,240.87 328.80,245.00 C326.90,249.13 326.12,254.18 325.90,258.30 C325.68,262.42 326.87,265.90 327.50,269.70 C328.13,273.50 329.48,276.45 329.70,281.10 C329.92,285.75 328.95,294.85 328.80,297.60" fill="none" stroke="#383838" stroke-width="1.2" stroke-linejoin="round" stroke-linecap="round" /><path d="M432.60,297.60 C432.45,294.85 431.48,285.75 431.70,281.10 C431.92,276.45 433.27,273.50 433.90,269.70 C434.53,265.90 435.72,262.42 435.50,258.30 C435.28,254.18 434.50,249.13 432.60,245.00 C430.70,240.87 428.07,236.83 424.10,233.50 C420.13,230.17 413.92,226.87 408.80,225.00 C403.68,223.13 395.97,222.75 393.40,222.30" fill="none" stroke="#383838" stroke-width="1.2" stroke-linejoin="round" stroke-linecap="round" /><path d="M372.00,223.60 C369.17,224.10 360.33,224.70 355.00,226.60 C349.67,228.50 343.92,231.77 340.00,235.00 C336.08,238.23 333.40,242.08 331.50,246.00 C329.60,249.92 328.82,254.55 328.60,258.50 C328.38,262.45 329.57,265.93 330.20,269.70 C330.83,273.47 332.18,276.33 332.40,281.10 C332.62,285.87 331.65,295.43 331.50,298.30" fill="none" stroke="#aaa" stroke-width="0.6" stroke-linejoin="round" stroke-linecap="round" /><path d="M429.90,298.30 C429.75,295.43 428.78,285.87 429.00,281.10 C429.22,276.33 430.57,273.47 431.20,269.70 C431.83,265.93 433.02,262.45 432.80,258.50 C432.58,254.55 431.80,249.92 429.90,246.00 C428.00,242.08 425.32,238.23 421.40,235.00 C417.48,231.77 411.73,228.50 406.40,226.60 C401.07,224.70 392.23,224.10 389.40,223.60" fill="none" stroke="#aaa" stroke-width="0.6" stroke-linejoin="round" stroke-linecap="round" /><line x1="380.7" y1="221" x2="380.7" y2="303.9" stroke="#1c1c1c" stroke-width="1.1"/><path d="M374.1,221.3 C373.8,216 376.5,214.7 380.5,214.7 C384.5,214.7 387.3,216 387,221.3 C384,222 377,222 374.1,221.3 Z" fill="#c8202e" stroke="#8a1420" stroke-width="0.5"/><ellipse cx="349.7" cy="241.2" rx="1.8" ry="2.7" fill="#686868" stroke="#484848" stroke-width="0.5" transform="rotate(25 349.7 241.2)"/><ellipse cx="411.7" cy="241.2" rx="1.8" ry="2.7" fill="#686868" stroke="#484848" stroke-width="0.5" transform="rotate(-25 411.7 241.2)"/><g transform="translate(-0.2,0)"><path d="M99.40,450.40 C99.20,449.50 98.60,447.80 98.20,445.00 C97.80,442.20 97.15,438.03 97.00,433.60 C96.85,429.17 96.68,423.48 97.30,418.40 C97.92,413.32 98.87,407.80 100.70,403.10 C102.53,398.40 105.00,393.88 108.30,390.20 C111.60,386.52 115.93,383.42 120.50,381.00 C125.07,378.58 130.50,376.78 135.70,375.70 C140.90,374.62 147.82,374.58 151.70,374.50 C155.58,374.42 156.57,375.20 159.00,375.20 C161.43,375.20 162.42,374.42 166.30,374.50 C170.18,374.58 177.10,374.62 182.30,375.70 C187.50,376.78 192.93,378.58 197.50,381.00 C202.07,383.42 206.40,386.52 209.70,390.20 C213.00,393.88 215.47,398.40 217.30,403.10 C219.13,407.80 220.08,413.32 220.70,418.40 C221.32,423.48 221.15,429.17 221.00,433.60 C220.85,438.03 220.20,442.20 219.80,445.00 C219.40,447.80 218.80,449.50 218.60,450.40 C216.35,451.15 211.15,453.65 205.10,454.90 C199.05,456.15 188.48,457.28 182.30,457.90 C176.12,458.52 171.88,458.47 168.00,458.60 C164.12,458.73 162.00,458.70 159.00,458.70 C156.00,458.70 153.88,458.73 150.00,458.60 C146.12,458.47 141.88,458.52 135.70,457.90 C129.52,457.28 118.95,456.15 112.90,454.90 C106.85,453.65 101.65,451.15 99.40,450.40 Z" fill="#fff" stroke="#1c1c1c" stroke-width="1.38" stroke-linejoin="round" stroke-linecap="round" /><path d="M99.40,450.40 C101.65,451.15 106.85,453.65 112.90,454.90 C118.95,456.15 129.52,457.28 135.70,457.90 C141.88,458.52 146.12,458.47 150.00,458.60 C153.88,458.73 156.00,458.70 159.00,458.70 C162.00,458.70 164.12,458.73 168.00,458.60 C171.88,458.47 176.12,458.52 182.30,457.90 C188.48,457.28 199.05,456.15 205.10,454.90 C211.15,453.65 216.35,451.15 218.60,450.40" fill="none" stroke="#1c1c1c" stroke-width="2.28" stroke-linejoin="round" stroke-linecap="round" /><line x1="159.0" y1="375" x2="159.0" y2="458.5" stroke="#1c1c1c" stroke-width="1.1"/><path d="M152.00,376.30 C148.02,376.97 134.62,377.87 128.10,380.30 C121.58,382.73 116.58,387.10 112.90,390.90 C109.22,394.70 107.40,399.03 106.00,403.10 C104.60,407.17 104.25,411.23 104.50,415.30 C104.75,419.37 106.75,423.68 107.50,427.50 C108.25,431.32 109.07,434.13 109.00,438.20 C108.93,442.27 107.42,449.62 107.10,451.90" fill="none" stroke="#383838" stroke-width="1.2" stroke-linejoin="round" stroke-linecap="round" /><path d="M210.90,451.90 C210.58,449.62 209.07,442.27 209.00,438.20 C208.93,434.13 209.75,431.32 210.50,427.50 C211.25,423.68 213.25,419.37 213.50,415.30 C213.75,411.23 213.40,407.17 212.00,403.10 C210.60,399.03 208.78,394.70 205.10,390.90 C201.42,387.10 196.42,382.73 189.90,380.30 C183.38,377.87 169.98,376.97 166.00,376.30" fill="none" stroke="#383838" stroke-width="1.2" stroke-linejoin="round" stroke-linecap="round" /><path d="M154.00,377.60 C150.00,378.30 136.45,379.37 130.00,381.80 C123.55,384.23 118.87,388.50 115.30,392.20 C111.73,395.90 109.97,400.15 108.60,404.00 C107.23,407.85 106.85,411.38 107.10,415.30 C107.35,419.22 109.35,423.68 110.10,427.50 C110.85,431.32 111.67,434.02 111.60,438.20 C111.53,442.38 110.02,450.20 109.70,452.60" fill="none" stroke="#aaa" stroke-width="0.6" stroke-linejoin="round" stroke-linecap="round" /><path d="M208.30,452.60 C207.98,450.20 206.47,442.38 206.40,438.20 C206.33,434.02 207.15,431.32 207.90,427.50 C208.65,423.68 210.65,419.22 210.90,415.30 C211.15,411.38 210.77,407.85 209.40,404.00 C208.03,400.15 206.27,395.90 202.70,392.20 C199.13,388.50 194.45,384.23 188.00,381.80 C181.55,379.37 168.00,378.30 164.00,377.60" fill="none" stroke="#aaa" stroke-width="0.6" stroke-linejoin="round" stroke-linecap="round" /><path d="M151.9,374.8 C151.6,369 154.5,367.8 159,367.8 C163.5,367.8 166.4,369 166.1,374.8 C163,375.6 155,375.6 151.9,374.8 Z" fill="#c8202e" stroke="#8a1420" stroke-width="0.5"/><ellipse cx="133.9" cy="390.9" rx="1.8" ry="2.7" fill="#686868" stroke="#484848" stroke-width="0.5" transform="rotate(25 133.9 390.9)"/><ellipse cx="184.3" cy="390.9" rx="1.8" ry="2.7" fill="#686868" stroke="#484848" stroke-width="0.5" transform="rotate(-25 184.3 390.9)"/></g><g transform="translate(147.4,0)"><rect x="125.6" y="441.8" width="67" height="13.4" fill="#c8202e"/><path d="M132,448.6 H178" stroke="#8e1822" stroke-width="3.2" stroke-dasharray="1.6,1.2" opacity="0.55"/><path d="M126,455.2 H192.5" stroke="#6a1018" stroke-width="0.8"/><path d="M125.00,456.20 C122.98,455.93 117.17,455.57 112.90,454.60 C108.63,453.63 101.65,451.10 99.40,450.40 C99.20,449.50 98.60,447.80 98.20,445.00 C97.80,442.20 97.15,438.03 97.00,433.60 C96.85,429.17 96.68,423.48 97.30,418.40 C97.92,413.32 98.87,407.80 100.70,403.10 C102.53,398.40 105.00,393.88 108.30,390.20 C111.60,386.52 115.93,383.42 120.50,381.00 C125.07,378.58 130.50,376.78 135.70,375.70 C140.90,374.62 147.82,374.58 151.70,374.50 C155.58,374.42 156.57,375.20 159.00,375.20 C161.43,375.20 162.42,374.42 166.30,374.50 C170.18,374.58 177.10,374.62 182.30,375.70 C187.50,376.78 192.93,378.58 197.50,381.00 C202.07,383.42 206.40,386.52 209.70,390.20 C213.00,393.88 215.47,398.40 217.30,403.10 C219.13,407.80 220.08,413.32 220.70,418.40 C221.32,423.48 221.15,429.17 221.00,433.60 C220.85,438.03 220.20,442.20 219.80,445.00 C219.40,447.80 218.80,449.50 218.60,450.40 C216.35,451.10 209.37,453.63 205.10,454.60 C200.83,455.57 195.02,455.93 193.00,456.20 C192.97,455.00 192.97,451.28 192.80,449.00 C192.63,446.72 193.22,444.90 192.00,442.50 C190.78,440.10 188.75,436.73 185.50,434.60 C182.25,432.47 176.92,430.70 172.50,429.70 C168.08,428.70 163.50,428.60 159.00,428.60 C154.50,428.60 149.92,428.70 145.50,429.70 C141.08,430.70 135.75,432.47 132.50,434.60 C129.25,436.73 127.22,440.10 126.00,442.50 C124.78,444.90 125.37,446.72 125.20,449.00 C125.03,451.28 125.03,455.00 125.00,456.20 Z" fill="#fff" stroke="#1c1c1c" stroke-width="1.38" stroke-linejoin="round" stroke-linecap="round" fill-rule="evenodd"/><path d="M127.23,447.40 C127.35,446.32 126.84,443.30 127.98,440.90 C129.12,438.50 131.03,435.13 134.09,433.00 C137.15,430.87 142.16,429.10 146.31,428.10 C150.46,427.10 154.77,427.00 159.00,427.00 C163.23,427.00 167.54,427.10 171.69,428.10 C175.84,429.10 180.85,430.87 183.91,433.00 C186.97,435.13 188.88,438.50 190.02,440.90 C191.16,443.30 190.65,446.32 190.77,447.40" fill="none" stroke="#777" stroke-width="0.72" stroke-linejoin="round" stroke-linecap="round" /><line x1="159.0" y1="375" x2="159.0" y2="428.6" stroke="#1c1c1c" stroke-width="1.1"/><path d="M152.00,376.30 C148.02,376.97 134.62,377.87 128.10,380.30 C121.58,382.73 116.58,387.10 112.90,390.90 C109.22,394.70 107.40,399.03 106.00,403.10 C104.60,407.17 104.25,411.23 104.50,415.30 C104.75,419.37 106.75,423.68 107.50,427.50 C108.25,431.32 109.07,434.13 109.00,438.20 C108.93,442.27 107.42,449.62 107.10,451.90" fill="none" stroke="#383838" stroke-width="1.2" stroke-linejoin="round" stroke-linecap="round" /><path d="M210.90,451.90 C210.58,449.62 209.07,442.27 209.00,438.20 C208.93,434.13 209.75,431.32 210.50,427.50 C211.25,423.68 213.25,419.37 213.50,415.30 C213.75,411.23 213.40,407.17 212.00,403.10 C210.60,399.03 208.78,394.70 205.10,390.90 C201.42,387.10 196.42,382.73 189.90,380.30 C183.38,377.87 169.98,376.97 166.00,376.30" fill="none" stroke="#383838" stroke-width="1.2" stroke-linejoin="round" stroke-linecap="round" /><path d="M154.00,377.60 C150.00,378.30 136.45,379.37 130.00,381.80 C123.55,384.23 118.87,388.50 115.30,392.20 C111.73,395.90 109.97,400.15 108.60,404.00 C107.23,407.85 106.85,411.38 107.10,415.30 C107.35,419.22 109.35,423.68 110.10,427.50 C110.85,431.32 111.67,434.02 111.60,438.20 C111.53,442.38 110.02,450.20 109.70,452.60" fill="none" stroke="#aaa" stroke-width="0.6" stroke-linejoin="round" stroke-linecap="round" /><path d="M208.30,452.60 C207.98,450.20 206.47,442.38 206.40,438.20 C206.33,434.02 207.15,431.32 207.90,427.50 C208.65,423.68 210.65,419.22 210.90,415.30 C211.15,411.38 210.77,407.85 209.40,404.00 C208.03,400.15 206.27,395.90 202.70,392.20 C199.13,388.50 194.45,384.23 188.00,381.80 C181.55,379.37 168.00,378.30 164.00,377.60" fill="none" stroke="#aaa" stroke-width="0.6" stroke-linejoin="round" stroke-linecap="round" /><path d="M151.9,374.8 C151.6,369 154.5,367.8 159,367.8 C163.5,367.8 166.4,369 166.1,374.8 C163,375.6 155,375.6 151.9,374.8 Z" fill="#c8202e" stroke="#8a1420" stroke-width="0.5"/><ellipse cx="133.9" cy="390.9" rx="1.8" ry="2.7" fill="#686868" stroke="#484848" stroke-width="0.5" transform="rotate(25 133.9 390.9)"/><ellipse cx="184.3" cy="390.9" rx="1.8" ry="2.7" fill="#686868" stroke="#484848" stroke-width="0.5" transform="rotate(-25 184.3 390.9)"/></g><g transform="translate(294.8,0)"><path d="M125.2,445.3 L182,448.6 L182,455.6 L125.2,453.5 Z" fill="#c8202e" stroke="#7a1018" stroke-width="0.5"/><path d="M182,447.2 L190.6,447.4 L190.8,454.8 L182,455.6 Z" fill="#f4f4f4" stroke="#999" stroke-width="0.6"/><path d="M125.00,456.20 C122.98,455.93 117.17,455.57 112.90,454.60 C108.63,453.63 101.65,451.10 99.40,450.40 C99.20,449.50 98.60,447.80 98.20,445.00 C97.80,442.20 97.15,438.03 97.00,433.60 C96.85,429.17 96.68,423.48 97.30,418.40 C97.92,413.32 98.87,407.80 100.70,403.10 C102.53,398.40 105.00,393.88 108.30,390.20 C111.60,386.52 115.93,383.42 120.50,381.00 C125.07,378.58 130.50,376.78 135.70,375.70 C140.90,374.62 147.82,374.58 151.70,374.50 C155.58,374.42 156.57,375.20 159.00,375.20 C161.43,375.20 162.42,374.42 166.30,374.50 C170.18,374.58 177.10,374.62 182.30,375.70 C187.50,376.78 192.93,378.58 197.50,381.00 C202.07,383.42 206.40,386.52 209.70,390.20 C213.00,393.88 215.47,398.40 217.30,403.10 C219.13,407.80 220.08,413.32 220.70,418.40 C221.32,423.48 221.15,429.17 221.00,433.60 C220.85,438.03 220.20,442.20 219.80,445.00 C219.40,447.80 218.80,449.50 218.60,450.40 C216.35,451.10 209.37,453.63 205.10,454.60 C200.83,455.57 195.02,455.93 193.00,456.20 C192.97,455.00 192.97,451.28 192.80,449.00 C192.63,446.72 193.22,444.90 192.00,442.50 C190.78,440.10 188.75,436.73 185.50,434.60 C182.25,432.47 176.92,430.70 172.50,429.70 C168.08,428.70 163.50,428.60 159.00,428.60 C154.50,428.60 149.92,428.70 145.50,429.70 C141.08,430.70 135.75,432.47 132.50,434.60 C129.25,436.73 127.22,440.10 126.00,442.50 C124.78,444.90 125.37,446.72 125.20,449.00 C125.03,451.28 125.03,455.00 125.00,456.20 Z" fill="#fff" stroke="#1c1c1c" stroke-width="1.38" stroke-linejoin="round" stroke-linecap="round" fill-rule="evenodd"/><path d="M182,447.2 L190.6,447.4 L190.8,454.8 L182,455.6 Z" fill="#f4f4f4" stroke="#999" stroke-width="0.6"/><path d="M190.6,445.4 L196.6,444.4 Q198.2,444.6 198.3,446 L198.6,452 Q198.4,453 197.2,453.2 L190.8,454.4 Z" fill="#c8202e" stroke="#4a0c14" stroke-width="0.8"/><path d="M127.23,447.40 C127.35,446.32 126.84,443.30 127.98,440.90 C129.12,438.50 131.03,435.13 134.09,433.00 C137.15,430.87 142.16,429.10 146.31,428.10 C150.46,427.10 154.77,427.00 159.00,427.00 C163.23,427.00 167.54,427.10 171.69,428.10 C175.84,429.10 180.85,430.87 183.91,433.00 C186.97,435.13 188.88,438.50 190.02,440.90 C191.16,443.30 190.65,446.32 190.77,447.40" fill="none" stroke="#777" stroke-width="0.72" stroke-linejoin="round" stroke-linecap="round" /><line x1="159.0" y1="375" x2="159.0" y2="428.6" stroke="#1c1c1c" stroke-width="1.1"/><path d="M152.00,376.30 C148.02,376.97 134.62,377.87 128.10,380.30 C121.58,382.73 116.58,387.10 112.90,390.90 C109.22,394.70 107.40,399.03 106.00,403.10 C104.60,407.17 104.25,411.23 104.50,415.30 C104.75,419.37 106.75,423.68 107.50,427.50 C108.25,431.32 109.07,434.13 109.00,438.20 C108.93,442.27 107.42,449.62 107.10,451.90" fill="none" stroke="#383838" stroke-width="1.2" stroke-linejoin="round" stroke-linecap="round" /><path d="M210.90,451.90 C210.58,449.62 209.07,442.27 209.00,438.20 C208.93,434.13 209.75,431.32 210.50,427.50 C211.25,423.68 213.25,419.37 213.50,415.30 C213.75,411.23 213.40,407.17 212.00,403.10 C210.60,399.03 208.78,394.70 205.10,390.90 C201.42,387.10 196.42,382.73 189.90,380.30 C183.38,377.87 169.98,376.97 166.00,376.30" fill="none" stroke="#383838" stroke-width="1.2" stroke-linejoin="round" stroke-linecap="round" /><path d="M154.00,377.60 C150.00,378.30 136.45,379.37 130.00,381.80 C123.55,384.23 118.87,388.50 115.30,392.20 C111.73,395.90 109.97,400.15 108.60,404.00 C107.23,407.85 106.85,411.38 107.10,415.30 C107.35,419.22 109.35,423.68 110.10,427.50 C110.85,431.32 111.67,434.02 111.60,438.20 C111.53,442.38 110.02,450.20 109.70,452.60" fill="none" stroke="#aaa" stroke-width="0.6" stroke-linejoin="round" stroke-linecap="round" /><path d="M208.30,452.60 C207.98,450.20 206.47,442.38 206.40,438.20 C206.33,434.02 207.15,431.32 207.90,427.50 C208.65,423.68 210.65,419.22 210.90,415.30 C211.15,411.38 210.77,407.85 209.40,404.00 C208.03,400.15 206.27,395.90 202.70,392.20 C199.13,388.50 194.45,384.23 188.00,381.80 C181.55,379.37 168.00,378.30 164.00,377.60" fill="none" stroke="#aaa" stroke-width="0.6" stroke-linejoin="round" stroke-linecap="round" /><path d="M151.9,374.8 C151.6,369 154.5,367.8 159,367.8 C163.5,367.8 166.4,369 166.1,374.8 C163,375.6 155,375.6 151.9,374.8 Z" fill="#c8202e" stroke="#8a1420" stroke-width="0.5"/><ellipse cx="133.9" cy="390.9" rx="1.8" ry="2.7" fill="#686868" stroke="#484848" stroke-width="0.5" transform="rotate(25 133.9 390.9)"/><ellipse cx="184.3" cy="390.9" rx="1.8" ry="2.7" fill="#686868" stroke="#484848" stroke-width="0.5" transform="rotate(-25 184.3 390.9)"/></g><g transform="translate(442.4,0)"><rect x="125.6" y="443.6" width="67.4" height="11.6" fill="#c8202e" stroke="#7a1018" stroke-width="0.5"/><path d="M160,444 H172 Q177.5,449.4 172,455 H160 Z" fill="#b81c28" stroke="#7a1018" stroke-width="0.6"/><rect x="145" y="442.2" width="13.2" height="14.2" rx="1.5" fill="none" stroke="#b9b9b9" stroke-width="1.5"/><rect x="147" y="448.6" width="9" height="1.6" fill="#cfcfcf"/><rect x="158.6" y="443.3" width="3.8" height="12.2" fill="#8e1822" stroke="#4a0a10" stroke-width="0.5"/><circle cx="131.4" cy="449.4" r="1.1" fill="#5a0e16"/><circle cx="140.8" cy="449.4" r="1.1" fill="#5a0e16"/><circle cx="169.3" cy="449.4" r="1.1" fill="#5a0e16"/><path d="M125.00,456.20 C122.98,455.93 117.17,455.57 112.90,454.60 C108.63,453.63 101.65,451.10 99.40,450.40 C99.20,449.50 98.60,447.80 98.20,445.00 C97.80,442.20 97.15,438.03 97.00,433.60 C96.85,429.17 96.68,423.48 97.30,418.40 C97.92,413.32 98.87,407.80 100.70,403.10 C102.53,398.40 105.00,393.88 108.30,390.20 C111.60,386.52 115.93,383.42 120.50,381.00 C125.07,378.58 130.50,376.78 135.70,375.70 C140.90,374.62 147.82,374.58 151.70,374.50 C155.58,374.42 156.57,375.20 159.00,375.20 C161.43,375.20 162.42,374.42 166.30,374.50 C170.18,374.58 177.10,374.62 182.30,375.70 C187.50,376.78 192.93,378.58 197.50,381.00 C202.07,383.42 206.40,386.52 209.70,390.20 C213.00,393.88 215.47,398.40 217.30,403.10 C219.13,407.80 220.08,413.32 220.70,418.40 C221.32,423.48 221.15,429.17 221.00,433.60 C220.85,438.03 220.20,442.20 219.80,445.00 C219.40,447.80 218.80,449.50 218.60,450.40 C216.35,451.10 209.37,453.63 205.10,454.60 C200.83,455.57 195.02,455.93 193.00,456.20 C192.97,455.00 192.97,451.28 192.80,449.00 C192.63,446.72 193.22,444.90 192.00,442.50 C190.78,440.10 188.75,436.73 185.50,434.60 C182.25,432.47 176.92,430.70 172.50,429.70 C168.08,428.70 163.50,428.60 159.00,428.60 C154.50,428.60 149.92,428.70 145.50,429.70 C141.08,430.70 135.75,432.47 132.50,434.60 C129.25,436.73 127.22,440.10 126.00,442.50 C124.78,444.90 125.37,446.72 125.20,449.00 C125.03,451.28 125.03,455.00 125.00,456.20 Z" fill="#fff" stroke="#1c1c1c" stroke-width="1.38" stroke-linejoin="round" stroke-linecap="round" fill-rule="evenodd"/><path d="M127.23,447.40 C127.35,446.32 126.84,443.30 127.98,440.90 C129.12,438.50 131.03,435.13 134.09,433.00 C137.15,430.87 142.16,429.10 146.31,428.10 C150.46,427.10 154.77,427.00 159.00,427.00 C163.23,427.00 167.54,427.10 171.69,428.10 C175.84,429.10 180.85,430.87 183.91,433.00 C186.97,435.13 188.88,438.50 190.02,440.90 C191.16,443.30 190.65,446.32 190.77,447.40" fill="none" stroke="#777" stroke-width="0.72" stroke-linejoin="round" stroke-linecap="round" /><line x1="159.0" y1="375" x2="159.0" y2="428.6" stroke="#1c1c1c" stroke-width="1.1"/><path d="M152.00,376.30 C148.02,376.97 134.62,377.87 128.10,380.30 C121.58,382.73 116.58,387.10 112.90,390.90 C109.22,394.70 107.40,399.03 106.00,403.10 C104.60,407.17 104.25,411.23 104.50,415.30 C104.75,419.37 106.75,423.68 107.50,427.50 C108.25,431.32 109.07,434.13 109.00,438.20 C108.93,442.27 107.42,449.62 107.10,451.90" fill="none" stroke="#383838" stroke-width="1.2" stroke-linejoin="round" stroke-linecap="round" /><path d="M210.90,451.90 C210.58,449.62 209.07,442.27 209.00,438.20 C208.93,434.13 209.75,431.32 210.50,427.50 C211.25,423.68 213.25,419.37 213.50,415.30 C213.75,411.23 213.40,407.17 212.00,403.10 C210.60,399.03 208.78,394.70 205.10,390.90 C201.42,387.10 196.42,382.73 189.90,380.30 C183.38,377.87 169.98,376.97 166.00,376.30" fill="none" stroke="#383838" stroke-width="1.2" stroke-linejoin="round" stroke-linecap="round" /><path d="M154.00,377.60 C150.00,378.30 136.45,379.37 130.00,381.80 C123.55,384.23 118.87,388.50 115.30,392.20 C111.73,395.90 109.97,400.15 108.60,404.00 C107.23,407.85 106.85,411.38 107.10,415.30 C107.35,419.22 109.35,423.68 110.10,427.50 C110.85,431.32 111.67,434.02 111.60,438.20 C111.53,442.38 110.02,450.20 109.70,452.60" fill="none" stroke="#aaa" stroke-width="0.6" stroke-linejoin="round" stroke-linecap="round" /><path d="M208.30,452.60 C207.98,450.20 206.47,442.38 206.40,438.20 C206.33,434.02 207.15,431.32 207.90,427.50 C208.65,423.68 210.65,419.22 210.90,415.30 C211.15,411.38 210.77,407.85 209.40,404.00 C208.03,400.15 206.27,395.90 202.70,392.20 C199.13,388.50 194.45,384.23 188.00,381.80 C181.55,379.37 168.00,378.30 164.00,377.60" fill="none" stroke="#aaa" stroke-width="0.6" stroke-linejoin="round" stroke-linecap="round" /><path d="M151.9,374.8 C151.6,369 154.5,367.8 159,367.8 C163.5,367.8 166.4,369 166.1,374.8 C163,375.6 155,375.6 151.9,374.8 Z" fill="#c8202e" stroke="#8a1420" stroke-width="0.5"/><ellipse cx="133.9" cy="390.9" rx="1.8" ry="2.7" fill="#686868" stroke="#484848" stroke-width="0.5" transform="rotate(25 133.9 390.9)"/><ellipse cx="184.3" cy="390.9" rx="1.8" ry="2.7" fill="#686868" stroke="#484848" stroke-width="0.5" transform="rotate(-25 184.3 390.9)"/></g><g transform="translate(159.4,0)"><path d="M-61.50,582.00 C-61.47,578.63 -61.68,568.23 -61.30,561.80 C-60.92,555.37 -60.45,549.28 -59.20,543.40 C-57.95,537.52 -56.75,532.13 -53.80,526.50 C-50.85,520.87 -46.62,514.33 -41.50,509.60 C-36.38,504.87 -30.02,500.53 -23.10,498.10 C-16.18,495.67 -7.70,495.00 0.00,495.00 C7.70,495.00 16.18,495.67 23.10,498.10 C30.02,500.53 36.38,504.87 41.50,509.60 C46.62,514.33 51.18,520.93 53.80,526.50 C56.42,532.07 56.33,537.12 57.20,543.00 C58.07,548.88 58.65,555.30 59.00,561.80 C59.35,568.30 59.25,578.63 59.30,582.00 L0,610 Z" fill="#c8202e" stroke="#1c1c1c" stroke-width="1.32" stroke-linejoin="round" stroke-linecap="round" /><path d="M-57.81,583.08 C-57.78,579.92 -57.98,570.14 -57.62,564.09 C-57.26,558.04 -56.82,552.33 -55.65,546.80 C-54.47,541.27 -53.34,536.21 -50.57,530.91 C-47.80,525.61 -43.82,519.47 -39.01,515.02 C-34.20,510.57 -28.22,506.50 -21.71,504.21 C-15.21,501.93 -7.24,501.30 0.00,501.30 C7.24,501.30 15.21,501.93 21.71,504.21 C28.22,506.50 34.20,510.57 39.01,515.02 C43.82,519.47 48.11,525.68 50.57,530.91 C53.03,536.14 52.95,540.89 53.77,546.42 C54.58,551.95 55.13,557.98 55.46,564.09 C55.79,570.20 55.69,579.92 55.74,583.08" fill="none" stroke="#a81c28" stroke-width="0.72" stroke-linejoin="round" stroke-linecap="round" /><path d="M-54.43,584.07 C-54.40,581.09 -54.59,571.89 -54.25,566.19 C-53.91,560.50 -53.50,555.12 -52.39,549.91 C-51.29,544.70 -50.22,539.94 -47.61,534.95 C-45.00,529.97 -41.26,524.18 -36.73,520.00 C-32.20,515.81 -26.56,511.97 -20.44,509.82 C-14.32,507.67 -6.81,507.07 0.00,507.07 C6.81,507.07 14.32,507.67 20.44,509.82 C26.56,511.97 32.20,515.81 36.73,520.00 C41.26,524.18 45.30,530.03 47.61,534.95 C49.93,539.88 49.85,544.35 50.62,549.55 C51.39,554.76 51.91,560.44 52.22,566.19 C52.52,571.95 52.44,581.09 52.48,584.07" fill="none" stroke="#aa1d29" stroke-width="0.72" stroke-linejoin="round" stroke-linecap="round" /><path d="M-51.04,585.06 C-51.02,582.27 -51.20,573.63 -50.88,568.29 C-50.56,562.95 -50.17,557.91 -49.14,553.02 C-48.10,548.14 -47.10,543.67 -44.65,539.00 C-42.21,534.32 -38.69,528.90 -34.45,524.97 C-30.20,521.04 -24.91,517.44 -19.17,515.42 C-13.43,513.40 -6.39,512.85 0.00,512.85 C6.39,512.85 13.43,513.40 19.17,515.42 C24.91,517.44 30.20,521.04 34.45,524.97 C38.69,528.90 42.48,534.37 44.65,539.00 C46.83,543.62 46.76,547.81 47.48,552.69 C48.20,557.57 48.68,562.90 48.97,568.29 C49.26,573.69 49.18,582.27 49.22,585.06" fill="none" stroke="#ad1e2a" stroke-width="0.72" stroke-linejoin="round" stroke-linecap="round" /><path d="M-47.66,586.05 C-47.64,583.44 -47.80,575.38 -47.51,570.39 C-47.21,565.41 -46.85,560.69 -45.88,556.13 C-44.91,551.58 -43.98,547.40 -41.70,543.04 C-39.41,538.67 -36.13,533.61 -32.16,529.94 C-28.20,526.27 -23.26,522.91 -17.90,521.03 C-12.54,519.14 -5.97,518.62 0.00,518.62 C5.97,518.62 12.54,519.14 17.90,521.03 C23.26,522.91 28.20,526.27 32.16,529.94 C36.13,533.61 39.67,538.72 41.70,543.04 C43.72,547.35 43.66,551.27 44.33,555.83 C45.00,560.38 45.45,565.36 45.73,570.39 C46.00,575.43 45.92,583.44 45.96,586.05" fill="none" stroke="#b01f2b" stroke-width="0.72" stroke-linejoin="round" stroke-linecap="round" /><path d="M-44.28,587.04 C-44.26,584.62 -44.41,577.13 -44.14,572.50 C-43.86,567.86 -43.52,563.48 -42.62,559.25 C-41.72,555.01 -40.86,551.14 -38.74,547.08 C-36.61,543.02 -33.56,538.32 -29.88,534.91 C-26.20,531.50 -21.61,528.38 -16.63,526.63 C-11.65,524.88 -5.54,524.40 0.00,524.40 C5.54,524.40 11.65,524.88 16.63,526.63 C21.61,528.38 26.20,531.50 29.88,534.91 C33.56,538.32 36.85,543.07 38.74,547.08 C40.62,551.09 40.56,554.72 41.18,558.96 C41.81,563.20 42.23,567.82 42.48,572.50 C42.73,577.18 42.66,584.62 42.70,587.04" fill="none" stroke="#b2202c" stroke-width="0.72" stroke-linejoin="round" stroke-linecap="round" /><ellipse cx="0" cy="602.7" rx="62.5" ry="61.699999999999996" fill="#e8e8e8" stroke="#333" stroke-width="0.5"/><ellipse cx="0" cy="602.7" rx="61.0" ry="60.199999999999996" fill="#5e5e5e" stroke="#1c1c1c" stroke-width="1.1"/><ellipse cx="0.3" cy="600.8" rx="53.6" ry="55.3" fill="#d3d3d3" stroke="#1c1c1c" stroke-width="1.1"/><clipPath id="clipfitted"><ellipse cx="0.3" cy="600.8" rx="53.1" ry="54.8"/></clipPath><g clip-path="url(#clipfitted)"><line x1="0.2" y1="540" x2="0.2" y2="665" stroke="#2a2a2a" stroke-width="9.0"/><line x1="0.2" y1="540" x2="0.2" y2="665" stroke="#989898" stroke-width="7.4"/><line x1="0.2" y1="540" x2="0.2" y2="665" stroke="#7a7a7a" stroke-width="0.5" stroke-dasharray="1,0.8" transform="translate(1.6,0)"/><line x1="-52" y1="576.0" x2="52" y2="625.0" stroke="#2a2a2a" stroke-width="8.4"/><line x1="-52" y1="576.0" x2="52" y2="625.0" stroke="#989898" stroke-width="6.8"/><line x1="-52" y1="576.0" x2="52" y2="625.0" stroke="#7a7a7a" stroke-width="0.5" stroke-dasharray="1,0.8" transform="translate(1.6,0)"/><line x1="52" y1="575.0" x2="-50" y2="625.4" stroke="#2a2a2a" stroke-width="8.4"/><line x1="52" y1="575.0" x2="-50" y2="625.4" stroke="#989898" stroke-width="6.8"/><line x1="52" y1="575.0" x2="-50" y2="625.4" stroke="#7a7a7a" stroke-width="0.5" stroke-dasharray="1,0.8" transform="translate(1.6,0)"/></g><circle cx="-0.4" cy="599.4" r="2.7" fill="#e4e4e4" stroke="#6a6a6a" stroke-width="0.8"/><circle cx="-19.2" cy="565.1" r="2.5" fill="#757575" stroke="#5a5a5a" stroke-width="0.5"/><circle cx="19.2" cy="565.1" r="2.5" fill="#757575" stroke="#5a5a5a" stroke-width="0.5"/><circle cx="-33.6" cy="601.4" r="2.5" fill="#757575" stroke="#5a5a5a" stroke-width="0.5"/><circle cx="32.6" cy="603.4" r="2.5" fill="#757575" stroke="#5a5a5a" stroke-width="0.5"/><circle cx="-18.8" cy="629.5" r="2.5" fill="#757575" stroke="#5a5a5a" stroke-width="0.5"/><circle cx="19.0" cy="629.5" r="2.5" fill="#757575" stroke="#5a5a5a" stroke-width="0.5"/></g><g transform="translate(308.3,0)"><path d="M-61.50,582.00 C-61.47,578.63 -61.68,568.23 -61.30,561.80 C-60.92,555.37 -60.45,549.28 -59.20,543.40 C-57.95,537.52 -56.75,532.13 -53.80,526.50 C-50.85,520.87 -46.62,514.33 -41.50,509.60 C-36.38,504.87 -30.02,500.53 -23.10,498.10 C-16.18,495.67 -7.70,495.00 0.00,495.00 C7.70,495.00 16.18,495.67 23.10,498.10 C30.02,500.53 36.38,504.87 41.50,509.60 C46.62,514.33 51.18,520.93 53.80,526.50 C56.42,532.07 56.33,537.12 57.20,543.00 C58.07,548.88 58.65,555.30 59.00,561.80 C59.35,568.30 59.25,578.63 59.30,582.00 L0,610 Z" fill="#c8202e" stroke="#1c1c1c" stroke-width="1.32" stroke-linejoin="round" stroke-linecap="round" /><path d="M-57.81,583.08 C-57.78,579.92 -57.98,570.14 -57.62,564.09 C-57.26,558.04 -56.82,552.33 -55.65,546.80 C-54.47,541.27 -53.34,536.21 -50.57,530.91 C-47.80,525.61 -43.82,519.47 -39.01,515.02 C-34.20,510.57 -28.22,506.50 -21.71,504.21 C-15.21,501.93 -7.24,501.30 0.00,501.30 C7.24,501.30 15.21,501.93 21.71,504.21 C28.22,506.50 34.20,510.57 39.01,515.02 C43.82,519.47 48.11,525.68 50.57,530.91 C53.03,536.14 52.95,540.89 53.77,546.42 C54.58,551.95 55.13,557.98 55.46,564.09 C55.79,570.20 55.69,579.92 55.74,583.08" fill="none" stroke="#a81c28" stroke-width="0.72" stroke-linejoin="round" stroke-linecap="round" /><path d="M-54.43,584.07 C-54.40,581.09 -54.59,571.89 -54.25,566.19 C-53.91,560.50 -53.50,555.12 -52.39,549.91 C-51.29,544.70 -50.22,539.94 -47.61,534.95 C-45.00,529.97 -41.26,524.18 -36.73,520.00 C-32.20,515.81 -26.56,511.97 -20.44,509.82 C-14.32,507.67 -6.81,507.07 0.00,507.07 C6.81,507.07 14.32,507.67 20.44,509.82 C26.56,511.97 32.20,515.81 36.73,520.00 C41.26,524.18 45.30,530.03 47.61,534.95 C49.93,539.88 49.85,544.35 50.62,549.55 C51.39,554.76 51.91,560.44 52.22,566.19 C52.52,571.95 52.44,581.09 52.48,584.07" fill="none" stroke="#aa1d29" stroke-width="0.72" stroke-linejoin="round" stroke-linecap="round" /><path d="M-51.04,585.06 C-51.02,582.27 -51.20,573.63 -50.88,568.29 C-50.56,562.95 -50.17,557.91 -49.14,553.02 C-48.10,548.14 -47.10,543.67 -44.65,539.00 C-42.21,534.32 -38.69,528.90 -34.45,524.97 C-30.20,521.04 -24.91,517.44 -19.17,515.42 C-13.43,513.40 -6.39,512.85 0.00,512.85 C6.39,512.85 13.43,513.40 19.17,515.42 C24.91,517.44 30.20,521.04 34.45,524.97 C38.69,528.90 42.48,534.37 44.65,539.00 C46.83,543.62 46.76,547.81 47.48,552.69 C48.20,557.57 48.68,562.90 48.97,568.29 C49.26,573.69 49.18,582.27 49.22,585.06" fill="none" stroke="#ad1e2a" stroke-width="0.72" stroke-linejoin="round" stroke-linecap="round" /><path d="M-47.66,586.05 C-47.64,583.44 -47.80,575.38 -47.51,570.39 C-47.21,565.41 -46.85,560.69 -45.88,556.13 C-44.91,551.58 -43.98,547.40 -41.70,543.04 C-39.41,538.67 -36.13,533.61 -32.16,529.94 C-28.20,526.27 -23.26,522.91 -17.90,521.03 C-12.54,519.14 -5.97,518.62 0.00,518.62 C5.97,518.62 12.54,519.14 17.90,521.03 C23.26,522.91 28.20,526.27 32.16,529.94 C36.13,533.61 39.67,538.72 41.70,543.04 C43.72,547.35 43.66,551.27 44.33,555.83 C45.00,560.38 45.45,565.36 45.73,570.39 C46.00,575.43 45.92,583.44 45.96,586.05" fill="none" stroke="#b01f2b" stroke-width="0.72" stroke-linejoin="round" stroke-linecap="round" /><path d="M-44.28,587.04 C-44.26,584.62 -44.41,577.13 -44.14,572.50 C-43.86,567.86 -43.52,563.48 -42.62,559.25 C-41.72,555.01 -40.86,551.14 -38.74,547.08 C-36.61,543.02 -33.56,538.32 -29.88,534.91 C-26.20,531.50 -21.61,528.38 -16.63,526.63 C-11.65,524.88 -5.54,524.40 0.00,524.40 C5.54,524.40 11.65,524.88 16.63,526.63 C21.61,528.38 26.20,531.50 29.88,534.91 C33.56,538.32 36.85,543.07 38.74,547.08 C40.62,551.09 40.56,554.72 41.18,558.96 C41.81,563.20 42.23,567.82 42.48,572.50 C42.73,577.18 42.66,584.62 42.70,587.04" fill="none" stroke="#b2202c" stroke-width="0.72" stroke-linejoin="round" stroke-linecap="round" /><ellipse cx="0" cy="602.7" rx="62.5" ry="61.699999999999996" fill="#e8e8e8" stroke="#333" stroke-width="0.5"/><ellipse cx="0" cy="602.7" rx="61.0" ry="60.199999999999996" fill="#5e5e5e" stroke="#1c1c1c" stroke-width="1.1"/><ellipse cx="0.3" cy="600.8" rx="52.6" ry="55.3" fill="#d3d3d3" stroke="#1c1c1c" stroke-width="1.1"/><clipPath id="clipsnap"><ellipse cx="0.3" cy="600.8" rx="52.1" ry="54.8"/></clipPath><g clip-path="url(#clipsnap)"><line x1="0.2" y1="540" x2="0.2" y2="640.4" stroke="#2a2a2a" stroke-width="9.0"/><line x1="0.2" y1="540" x2="0.2" y2="640.4" stroke="#989898" stroke-width="7.4"/><line x1="0.2" y1="540" x2="0.2" y2="640.4" stroke="#7a7a7a" stroke-width="0.5" stroke-dasharray="1,0.8" transform="translate(1.6,0)"/><line x1="-52" y1="576.0" x2="52" y2="625.0" stroke="#2a2a2a" stroke-width="8.4"/><line x1="-52" y1="576.0" x2="52" y2="625.0" stroke="#989898" stroke-width="6.8"/><line x1="-52" y1="576.0" x2="52" y2="625.0" stroke="#7a7a7a" stroke-width="0.5" stroke-dasharray="1,0.8" transform="translate(1.6,0)"/><line x1="52" y1="575.0" x2="-50" y2="625.4" stroke="#2a2a2a" stroke-width="8.4"/><line x1="52" y1="575.0" x2="-50" y2="625.4" stroke="#989898" stroke-width="6.8"/><line x1="52" y1="575.0" x2="-50" y2="625.4" stroke="#7a7a7a" stroke-width="0.5" stroke-dasharray="1,0.8" transform="translate(1.6,0)"/></g><circle cx="-0.4" cy="599.4" r="2.7" fill="#e4e4e4" stroke="#6a6a6a" stroke-width="0.8"/><circle cx="-19.2" cy="565.1" r="2.5" fill="#757575" stroke="#5a5a5a" stroke-width="0.5"/><circle cx="19.2" cy="565.1" r="2.5" fill="#757575" stroke="#5a5a5a" stroke-width="0.5"/><circle cx="-33.6" cy="601.4" r="2.5" fill="#757575" stroke="#5a5a5a" stroke-width="0.5"/><circle cx="32.6" cy="603.4" r="2.5" fill="#757575" stroke="#5a5a5a" stroke-width="0.5"/><circle cx="-18.8" cy="629.5" r="2.5" fill="#757575" stroke="#5a5a5a" stroke-width="0.5"/><circle cx="19.0" cy="629.5" r="2.5" fill="#757575" stroke="#5a5a5a" stroke-width="0.5"/><path d="M-28.8,651 L-29.8,659.4 Q0,673 29.8,659.6 L28.8,651 Q0,640 -28.8,651 Z" fill="#fefefe"/><path d="M-28.4,650.6 L-29.6,658.4" stroke="#1c1c1c" stroke-width="1.1"/><path d="M28.0,650.6 L29.6,658.6" stroke="#1c1c1c" stroke-width="1.1"/><path d="M-29,645.4 C-20,641.4 -10,640.2 0,640.2 C10,640.2 20,641.4 28.6,645.8 L27,650 C19,646.4 10,645.4 0,645.4 C-10,645.4 -19,646.2 -26.8,649.6 Z" fill="#efefef" stroke="#1c1c1c" stroke-width="1"/><path d="M-26.8,651 C-19,647.4 -10,646.6 0,646.6 C10,646.6 19,647.6 26.6,651.4" fill="none" stroke="#555" stroke-width="1.5"/><path d="M-28.2,655.6 Q0,662.6 27.4,653 L27.6,657.6 Q0,670.4 -28,658.8 Z" fill="#c8202e" stroke="#4a0c12" stroke-width="0.8"/></g><g transform="translate(454.4,0)"><path d="M-61.50,582.00 C-61.47,578.63 -61.68,568.23 -61.30,561.80 C-60.92,555.37 -60.45,549.28 -59.20,543.40 C-57.95,537.52 -56.75,532.13 -53.80,526.50 C-50.85,520.87 -46.62,514.33 -41.50,509.60 C-36.38,504.87 -30.02,500.53 -23.10,498.10 C-16.18,495.67 -7.70,495.00 0.00,495.00 C7.70,495.00 16.18,495.67 23.10,498.10 C30.02,500.53 36.38,504.87 41.50,509.60 C46.62,514.33 51.18,520.93 53.80,526.50 C56.42,532.07 56.33,537.12 57.20,543.00 C58.07,548.88 58.65,555.30 59.00,561.80 C59.35,568.30 59.25,578.63 59.30,582.00 L0,610 Z" fill="#c8202e" stroke="#1c1c1c" stroke-width="1.32" stroke-linejoin="round" stroke-linecap="round" /><path d="M-57.81,583.08 C-57.78,579.92 -57.98,570.14 -57.62,564.09 C-57.26,558.04 -56.82,552.33 -55.65,546.80 C-54.47,541.27 -53.34,536.21 -50.57,530.91 C-47.80,525.61 -43.82,519.47 -39.01,515.02 C-34.20,510.57 -28.22,506.50 -21.71,504.21 C-15.21,501.93 -7.24,501.30 0.00,501.30 C7.24,501.30 15.21,501.93 21.71,504.21 C28.22,506.50 34.20,510.57 39.01,515.02 C43.82,519.47 48.11,525.68 50.57,530.91 C53.03,536.14 52.95,540.89 53.77,546.42 C54.58,551.95 55.13,557.98 55.46,564.09 C55.79,570.20 55.69,579.92 55.74,583.08" fill="none" stroke="#a81c28" stroke-width="0.72" stroke-linejoin="round" stroke-linecap="round" /><path d="M-54.43,584.07 C-54.40,581.09 -54.59,571.89 -54.25,566.19 C-53.91,560.50 -53.50,555.12 -52.39,549.91 C-51.29,544.70 -50.22,539.94 -47.61,534.95 C-45.00,529.97 -41.26,524.18 -36.73,520.00 C-32.20,515.81 -26.56,511.97 -20.44,509.82 C-14.32,507.67 -6.81,507.07 0.00,507.07 C6.81,507.07 14.32,507.67 20.44,509.82 C26.56,511.97 32.20,515.81 36.73,520.00 C41.26,524.18 45.30,530.03 47.61,534.95 C49.93,539.88 49.85,544.35 50.62,549.55 C51.39,554.76 51.91,560.44 52.22,566.19 C52.52,571.95 52.44,581.09 52.48,584.07" fill="none" stroke="#aa1d29" stroke-width="0.72" stroke-linejoin="round" stroke-linecap="round" /><path d="M-51.04,585.06 C-51.02,582.27 -51.20,573.63 -50.88,568.29 C-50.56,562.95 -50.17,557.91 -49.14,553.02 C-48.10,548.14 -47.10,543.67 -44.65,539.00 C-42.21,534.32 -38.69,528.90 -34.45,524.97 C-30.20,521.04 -24.91,517.44 -19.17,515.42 C-13.43,513.40 -6.39,512.85 0.00,512.85 C6.39,512.85 13.43,513.40 19.17,515.42 C24.91,517.44 30.20,521.04 34.45,524.97 C38.69,528.90 42.48,534.37 44.65,539.00 C46.83,543.62 46.76,547.81 47.48,552.69 C48.20,557.57 48.68,562.90 48.97,568.29 C49.26,573.69 49.18,582.27 49.22,585.06" fill="none" stroke="#ad1e2a" stroke-width="0.72" stroke-linejoin="round" stroke-linecap="round" /><path d="M-47.66,586.05 C-47.64,583.44 -47.80,575.38 -47.51,570.39 C-47.21,565.41 -46.85,560.69 -45.88,556.13 C-44.91,551.58 -43.98,547.40 -41.70,543.04 C-39.41,538.67 -36.13,533.61 -32.16,529.94 C-28.20,526.27 -23.26,522.91 -17.90,521.03 C-12.54,519.14 -5.97,518.62 0.00,518.62 C5.97,518.62 12.54,519.14 17.90,521.03 C23.26,522.91 28.20,526.27 32.16,529.94 C36.13,533.61 39.67,538.72 41.70,543.04 C43.72,547.35 43.66,551.27 44.33,555.83 C45.00,560.38 45.45,565.36 45.73,570.39 C46.00,575.43 45.92,583.44 45.96,586.05" fill="none" stroke="#b01f2b" stroke-width="0.72" stroke-linejoin="round" stroke-linecap="round" /><path d="M-44.28,587.04 C-44.26,584.62 -44.41,577.13 -44.14,572.50 C-43.86,567.86 -43.52,563.48 -42.62,559.25 C-41.72,555.01 -40.86,551.14 -38.74,547.08 C-36.61,543.02 -33.56,538.32 -29.88,534.91 C-26.20,531.50 -21.61,528.38 -16.63,526.63 C-11.65,524.88 -5.54,524.40 0.00,524.40 C5.54,524.40 11.65,524.88 16.63,526.63 C21.61,528.38 26.20,531.50 29.88,534.91 C33.56,538.32 36.85,543.07 38.74,547.08 C40.62,551.09 40.56,554.72 41.18,558.96 C41.81,563.20 42.23,567.82 42.48,572.50 C42.73,577.18 42.66,584.62 42.70,587.04" fill="none" stroke="#b2202c" stroke-width="0.72" stroke-linejoin="round" stroke-linecap="round" /><ellipse cx="0" cy="602.7" rx="62.5" ry="61.699999999999996" fill="#e8e8e8" stroke="#333" stroke-width="0.5"/><ellipse cx="0" cy="602.7" rx="61.0" ry="60.199999999999996" fill="#5e5e5e" stroke="#1c1c1c" stroke-width="1.1"/><ellipse cx="0.3" cy="600.8" rx="52.6" ry="55.3" fill="#d3d3d3" stroke="#1c1c1c" stroke-width="1.1"/><clipPath id="clipstrap"><ellipse cx="0.3" cy="600.8" rx="52.1" ry="54.8"/></clipPath><g clip-path="url(#clipstrap)"><line x1="0.2" y1="540" x2="0.2" y2="640.4" stroke="#2a2a2a" stroke-width="9.0"/><line x1="0.2" y1="540" x2="0.2" y2="640.4" stroke="#989898" stroke-width="7.4"/><line x1="0.2" y1="540" x2="0.2" y2="640.4" stroke="#7a7a7a" stroke-width="0.5" stroke-dasharray="1,0.8" transform="translate(1.6,0)"/><line x1="-52" y1="576.0" x2="52" y2="625.0" stroke="#2a2a2a" stroke-width="8.4"/><line x1="-52" y1="576.0" x2="52" y2="625.0" stroke="#989898" stroke-width="6.8"/><line x1="-52" y1="576.0" x2="52" y2="625.0" stroke="#7a7a7a" stroke-width="0.5" stroke-dasharray="1,0.8" transform="translate(1.6,0)"/><line x1="52" y1="575.0" x2="-50" y2="625.4" stroke="#2a2a2a" stroke-width="8.4"/><line x1="52" y1="575.0" x2="-50" y2="625.4" stroke="#989898" stroke-width="6.8"/><line x1="52" y1="575.0" x2="-50" y2="625.4" stroke="#7a7a7a" stroke-width="0.5" stroke-dasharray="1,0.8" transform="translate(1.6,0)"/></g><circle cx="-0.4" cy="599.4" r="2.7" fill="#e4e4e4" stroke="#6a6a6a" stroke-width="0.8"/><circle cx="-19.2" cy="565.1" r="2.5" fill="#757575" stroke="#5a5a5a" stroke-width="0.5"/><circle cx="19.2" cy="565.1" r="2.5" fill="#757575" stroke="#5a5a5a" stroke-width="0.5"/><circle cx="-33.6" cy="601.4" r="2.5" fill="#757575" stroke="#5a5a5a" stroke-width="0.5"/><circle cx="32.6" cy="603.4" r="2.5" fill="#757575" stroke="#5a5a5a" stroke-width="0.5"/><circle cx="-18.8" cy="629.5" r="2.5" fill="#757575" stroke="#5a5a5a" stroke-width="0.5"/><circle cx="19.0" cy="629.5" r="2.5" fill="#757575" stroke="#5a5a5a" stroke-width="0.5"/><path d="M-28.8,651 L-29.8,659.4 Q0,673 29.8,659.6 L28.8,651 Q0,640 -28.8,651 Z" fill="#fefefe"/><path d="M-28.4,650.6 L-29.6,658.4" stroke="#1c1c1c" stroke-width="1.1"/><path d="M28.0,650.6 L29.6,658.6" stroke="#1c1c1c" stroke-width="1.1"/><path d="M-29,645.4 C-20,641.4 -10,640.2 0,640.2 C10,640.2 20,641.4 28.6,645.8 L27,650 C19,646.4 10,645.4 0,645.4 C-10,645.4 -19,646.2 -26.8,649.6 Z" fill="#efefef" stroke="#1c1c1c" stroke-width="1"/><path d="M-26.8,651 C-19,647.4 -10,646.6 0,646.6 C10,646.6 19,647.6 26.6,651.4" fill="none" stroke="#555" stroke-width="1.5"/><path d="M-28,652.4 Q0,660.6 26.2,653.2 L26.4,657.8 Q0,666.4 -27.6,659.2 Z" fill="#c8202e" stroke="#4a0c12" stroke-width="0.8"/><path d="M-22,654.2 L-12.2,656.2 L-12,662.8 L-21.8,661 Z" fill="#f2f2f2" stroke="#aaa" stroke-width="0.5"/></g><g transform="translate(601.9,0)"><path d="M-61.50,582.00 C-61.47,578.63 -61.68,568.23 -61.30,561.80 C-60.92,555.37 -60.45,549.28 -59.20,543.40 C-57.95,537.52 -56.75,532.13 -53.80,526.50 C-50.85,520.87 -46.62,514.33 -41.50,509.60 C-36.38,504.87 -30.02,500.53 -23.10,498.10 C-16.18,495.67 -7.70,495.00 0.00,495.00 C7.70,495.00 16.18,495.67 23.10,498.10 C30.02,500.53 36.38,504.87 41.50,509.60 C46.62,514.33 51.18,520.93 53.80,526.50 C56.42,532.07 56.33,537.12 57.20,543.00 C58.07,548.88 58.65,555.30 59.00,561.80 C59.35,568.30 59.25,578.63 59.30,582.00 L0,610 Z" fill="#c8202e" stroke="#1c1c1c" stroke-width="1.32" stroke-linejoin="round" stroke-linecap="round" /><path d="M-57.81,583.08 C-57.78,579.92 -57.98,570.14 -57.62,564.09 C-57.26,558.04 -56.82,552.33 -55.65,546.80 C-54.47,541.27 -53.34,536.21 -50.57,530.91 C-47.80,525.61 -43.82,519.47 -39.01,515.02 C-34.20,510.57 -28.22,506.50 -21.71,504.21 C-15.21,501.93 -7.24,501.30 0.00,501.30 C7.24,501.30 15.21,501.93 21.71,504.21 C28.22,506.50 34.20,510.57 39.01,515.02 C43.82,519.47 48.11,525.68 50.57,530.91 C53.03,536.14 52.95,540.89 53.77,546.42 C54.58,551.95 55.13,557.98 55.46,564.09 C55.79,570.20 55.69,579.92 55.74,583.08" fill="none" stroke="#a81c28" stroke-width="0.72" stroke-linejoin="round" stroke-linecap="round" /><path d="M-54.43,584.07 C-54.40,581.09 -54.59,571.89 -54.25,566.19 C-53.91,560.50 -53.50,555.12 -52.39,549.91 C-51.29,544.70 -50.22,539.94 -47.61,534.95 C-45.00,529.97 -41.26,524.18 -36.73,520.00 C-32.20,515.81 -26.56,511.97 -20.44,509.82 C-14.32,507.67 -6.81,507.07 0.00,507.07 C6.81,507.07 14.32,507.67 20.44,509.82 C26.56,511.97 32.20,515.81 36.73,520.00 C41.26,524.18 45.30,530.03 47.61,534.95 C49.93,539.88 49.85,544.35 50.62,549.55 C51.39,554.76 51.91,560.44 52.22,566.19 C52.52,571.95 52.44,581.09 52.48,584.07" fill="none" stroke="#aa1d29" stroke-width="0.72" stroke-linejoin="round" stroke-linecap="round" /><path d="M-51.04,585.06 C-51.02,582.27 -51.20,573.63 -50.88,568.29 C-50.56,562.95 -50.17,557.91 -49.14,553.02 C-48.10,548.14 -47.10,543.67 -44.65,539.00 C-42.21,534.32 -38.69,528.90 -34.45,524.97 C-30.20,521.04 -24.91,517.44 -19.17,515.42 C-13.43,513.40 -6.39,512.85 0.00,512.85 C6.39,512.85 13.43,513.40 19.17,515.42 C24.91,517.44 30.20,521.04 34.45,524.97 C38.69,528.90 42.48,534.37 44.65,539.00 C46.83,543.62 46.76,547.81 47.48,552.69 C48.20,557.57 48.68,562.90 48.97,568.29 C49.26,573.69 49.18,582.27 49.22,585.06" fill="none" stroke="#ad1e2a" stroke-width="0.72" stroke-linejoin="round" stroke-linecap="round" /><path d="M-47.66,586.05 C-47.64,583.44 -47.80,575.38 -47.51,570.39 C-47.21,565.41 -46.85,560.69 -45.88,556.13 C-44.91,551.58 -43.98,547.40 -41.70,543.04 C-39.41,538.67 -36.13,533.61 -32.16,529.94 C-28.20,526.27 -23.26,522.91 -17.90,521.03 C-12.54,519.14 -5.97,518.62 0.00,518.62 C5.97,518.62 12.54,519.14 17.90,521.03 C23.26,522.91 28.20,526.27 32.16,529.94 C36.13,533.61 39.67,538.72 41.70,543.04 C43.72,547.35 43.66,551.27 44.33,555.83 C45.00,560.38 45.45,565.36 45.73,570.39 C46.00,575.43 45.92,583.44 45.96,586.05" fill="none" stroke="#b01f2b" stroke-width="0.72" stroke-linejoin="round" stroke-linecap="round" /><path d="M-44.28,587.04 C-44.26,584.62 -44.41,577.13 -44.14,572.50 C-43.86,567.86 -43.52,563.48 -42.62,559.25 C-41.72,555.01 -40.86,551.14 -38.74,547.08 C-36.61,543.02 -33.56,538.32 -29.88,534.91 C-26.20,531.50 -21.61,528.38 -16.63,526.63 C-11.65,524.88 -5.54,524.40 0.00,524.40 C5.54,524.40 11.65,524.88 16.63,526.63 C21.61,528.38 26.20,531.50 29.88,534.91 C33.56,538.32 36.85,543.07 38.74,547.08 C40.62,551.09 40.56,554.72 41.18,558.96 C41.81,563.20 42.23,567.82 42.48,572.50 C42.73,577.18 42.66,584.62 42.70,587.04" fill="none" stroke="#b2202c" stroke-width="0.72" stroke-linejoin="round" stroke-linecap="round" /><ellipse cx="0" cy="602.7" rx="62.5" ry="61.699999999999996" fill="#e8e8e8" stroke="#333" stroke-width="0.5"/><ellipse cx="0" cy="602.7" rx="61.0" ry="60.199999999999996" fill="#5e5e5e" stroke="#1c1c1c" stroke-width="1.1"/><ellipse cx="0.3" cy="600.8" rx="52.6" ry="55.3" fill="#d3d3d3" stroke="#1c1c1c" stroke-width="1.1"/><clipPath id="clipbuckle"><ellipse cx="0.3" cy="600.8" rx="52.1" ry="54.8"/></clipPath><g clip-path="url(#clipbuckle)"><line x1="0.2" y1="540" x2="0.2" y2="640.4" stroke="#2a2a2a" stroke-width="9.0"/><line x1="0.2" y1="540" x2="0.2" y2="640.4" stroke="#989898" stroke-width="7.4"/><line x1="0.2" y1="540" x2="0.2" y2="640.4" stroke="#7a7a7a" stroke-width="0.5" stroke-dasharray="1,0.8" transform="translate(1.6,0)"/><line x1="-52" y1="576.0" x2="52" y2="625.0" stroke="#2a2a2a" stroke-width="8.4"/><line x1="-52" y1="576.0" x2="52" y2="625.0" stroke="#989898" stroke-width="6.8"/><line x1="-52" y1="576.0" x2="52" y2="625.0" stroke="#7a7a7a" stroke-width="0.5" stroke-dasharray="1,0.8" transform="translate(1.6,0)"/><line x1="52" y1="575.0" x2="-50" y2="625.4" stroke="#2a2a2a" stroke-width="8.4"/><line x1="52" y1="575.0" x2="-50" y2="625.4" stroke="#989898" stroke-width="6.8"/><line x1="52" y1="575.0" x2="-50" y2="625.4" stroke="#7a7a7a" stroke-width="0.5" stroke-dasharray="1,0.8" transform="translate(1.6,0)"/></g><circle cx="-0.4" cy="599.4" r="2.7" fill="#e4e4e4" stroke="#6a6a6a" stroke-width="0.8"/><circle cx="-19.2" cy="565.1" r="2.5" fill="#757575" stroke="#5a5a5a" stroke-width="0.5"/><circle cx="19.2" cy="565.1" r="2.5" fill="#757575" stroke="#5a5a5a" stroke-width="0.5"/><circle cx="-33.6" cy="601.4" r="2.5" fill="#757575" stroke="#5a5a5a" stroke-width="0.5"/><circle cx="32.6" cy="603.4" r="2.5" fill="#757575" stroke="#5a5a5a" stroke-width="0.5"/><circle cx="-18.8" cy="629.5" r="2.5" fill="#757575" stroke="#5a5a5a" stroke-width="0.5"/><circle cx="19.0" cy="629.5" r="2.5" fill="#757575" stroke="#5a5a5a" stroke-width="0.5"/><path d="M-28.8,651 L-29.8,659.4 Q0,673 29.8,659.6 L28.8,651 Q0,640 -28.8,651 Z" fill="#fefefe"/><path d="M-28.4,650.6 L-29.6,658.4" stroke="#1c1c1c" stroke-width="1.1"/><path d="M28.0,650.6 L29.6,658.6" stroke="#1c1c1c" stroke-width="1.1"/><path d="M-29,645.4 C-20,641.4 -10,640.2 0,640.2 C10,640.2 20,641.4 28.6,645.8 L27,650 C19,646.4 10,645.4 0,645.4 C-10,645.4 -19,646.2 -26.8,649.6 Z" fill="#efefef" stroke="#1c1c1c" stroke-width="1"/><path d="M-26.8,651 C-19,647.4 -10,646.6 0,646.6 C10,646.6 19,647.6 26.6,651.4" fill="none" stroke="#555" stroke-width="1.5"/><path d="M-26,653.2 Q0,660.6 26.4,653.2 L26.6,657.8 Q0,669.6 -25.8,658 Z" fill="#c8202e" stroke="#4a0c12" stroke-width="0.8"/><rect x="-2.8" y="656" width="2.4" height="9" fill="#f2f2f2"/></g></g><g id="wm" opacity="0.3" filter="url(#soft)"><g transform="translate(74.8,26)"><use href="#malogo"/><text x="72.0" y="4.5" font-family="Liberation Sans, sans-serif" font-size="13" textLength="116.6" lengthAdjust="spacingAndGlyphs"><tspan fill="#707070" stroke="#707070" stroke-width="0.32">mark anthony </tspan><tspan fill="#a2a2a2">media</tspan></text></g><g transform="translate(505,26)"><use href="#malogo"/><text x="72.0" y="4.5" font-family="Liberation Sans, sans-serif" font-size="13" textLength="116.6" lengthAdjust="spacingAndGlyphs"><tspan fill="#707070" stroke="#707070" stroke-width="0.32">mark anthony </tspan><tspan fill="#a2a2a2">media</tspan></text></g><g transform="translate(74.8,141)"><use href="#malogo"/><text x="72.0" y="4.5" font-family="Liberation Sans, sans-serif" font-size="13" textLength="116.6" lengthAdjust="spacingAndGlyphs"><tspan fill="#707070" stroke="#707070" stroke-width="0.32">mark anthony </tspan><tspan fill="#a2a2a2">media</tspan></text></g><g transform="translate(505,141)"><use href="#malogo"/><text x="72.0" y="4.5" font-family="Liberation Sans, sans-serif" font-size="13" textLength="116.6" lengthAdjust="spacingAndGlyphs"><tspan fill="#707070" stroke="#707070" stroke-width="0.32">mark anthony </tspan><tspan fill="#a2a2a2">media</tspan></text></g><g transform="translate(74.8,267)"><use href="#malogo"/><text x="72.0" y="4.5" font-family="Liberation Sans, sans-serif" font-size="13" textLength="116.6" lengthAdjust="spacingAndGlyphs"><tspan fill="#707070" stroke="#707070" stroke-width="0.32">mark anthony </tspan><tspan fill="#a2a2a2">media</tspan></text></g><g transform="translate(505,267)"><use href="#malogo"/><text x="72.0" y="4.5" font-family="Liberation Sans, sans-serif" font-size="13" textLength="116.6" lengthAdjust="spacingAndGlyphs"><tspan fill="#707070" stroke="#707070" stroke-width="0.32">mark anthony </tspan><tspan fill="#a2a2a2">media</tspan></text></g><g transform="translate(74.8,393.5)"><use href="#malogo"/><text x="72.0" y="4.5" font-family="Liberation Sans, sans-serif" font-size="13" textLength="116.6" lengthAdjust="spacingAndGlyphs"><tspan fill="#707070" stroke="#707070" stroke-width="0.32">mark anthony </tspan><tspan fill="#a2a2a2">media</tspan></text></g><g transform="translate(505,393.5)"><use href="#malogo"/><text x="72.0" y="4.5" font-family="Liberation Sans, sans-serif" font-size="13" textLength="116.6" lengthAdjust="spacingAndGlyphs"><tspan fill="#707070" stroke="#707070" stroke-width="0.32">mark anthony </tspan><tspan fill="#a2a2a2">media</tspan></text></g><g transform="translate(74.8,520)"><use href="#malogo"/><text x="72.0" y="4.5" font-family="Liberation Sans, sans-serif" font-size="13" textLength="116.6" lengthAdjust="spacingAndGlyphs"><tspan fill="#707070" stroke="#707070" stroke-width="0.32">mark anthony </tspan><tspan fill="#a2a2a2">media</tspan></text></g><g transform="translate(505,520)"><use href="#malogo"/><text x="72.0" y="4.5" font-family="Liberation Sans, sans-serif" font-size="13" textLength="116.6" lengthAdjust="spacingAndGlyphs"><tspan fill="#707070" stroke="#707070" stroke-width="0.32">mark anthony </tspan><tspan fill="#a2a2a2">media</tspan></text></g><g transform="translate(74.8,647)"><use href="#malogo"/><text x="72.0" y="4.5" font-family="Liberation Sans, sans-serif" font-size="13" textLength="116.6" lengthAdjust="spacingAndGlyphs"><tspan fill="#707070" stroke="#707070" stroke-width="0.32">mark anthony </tspan><tspan fill="#a2a2a2">media</tspan></text></g><g transform="translate(505,647)"><use href="#malogo"/><text x="72.0" y="4.5" font-family="Liberation Sans, sans-serif" font-size="13" textLength="116.6" lengthAdjust="spacingAndGlyphs"><tspan fill="#707070" stroke="#707070" stroke-width="0.32">mark anthony </tspan><tspan fill="#a2a2a2">media</tspan></text></g><g transform="translate(290,82.5)"><use href="#malogo"/><text x="72.0" y="4.5" font-family="Liberation Sans, sans-serif" font-size="13" textLength="116.6" lengthAdjust="spacingAndGlyphs"><tspan fill="#707070" stroke="#707070" stroke-width="0.32">mark anthony </tspan><tspan fill="#a2a2a2">media</tspan></text></g><g transform="translate(290,209.5)"><use href="#malogo"/><text x="72.0" y="4.5" font-family="Liberation Sans, sans-serif" font-size="13" textLength="116.6" lengthAdjust="spacingAndGlyphs"><tspan fill="#707070" stroke="#707070" stroke-width="0.32">mark anthony </tspan><tspan fill="#a2a2a2">media</tspan></text></g><g transform="translate(290,336)"><use href="#malogo"/><text x="72.0" y="4.5" font-family="Liberation Sans, sans-serif" font-size="13" textLength="116.6" lengthAdjust="spacingAndGlyphs"><tspan fill="#707070" stroke="#707070" stroke-width="0.32">mark anthony </tspan><tspan fill="#a2a2a2">media</tspan></text></g><g transform="translate(290,463)"><use href="#malogo"/><text x="72.0" y="4.5" font-family="Liberation Sans, sans-serif" font-size="13" textLength="116.6" lengthAdjust="spacingAndGlyphs"><tspan fill="#707070" stroke="#707070" stroke-width="0.32">mark anthony </tspan><tspan fill="#a2a2a2">media</tspan></text></g><g transform="translate(290,590)"><use href="#malogo"/><text x="72.0" y="4.5" font-family="Liberation Sans, sans-serif" font-size="13" textLength="116.6" lengthAdjust="spacingAndGlyphs"><tspan fill="#707070" stroke="#707070" stroke-width="0.32">mark anthony </tspan><tspan fill="#a2a2a2">media</tspan></text></g></g></svg><svg width="1024" height="683" viewBox="0 0 1024 683" style="position:absolute;left:0;top:0" font-family="Liberation Sans, sans-serif"><defs><filter id="soft2" x="-2%" y="-2%" width="104%" height="104%"><feGaussianBlur stdDeviation="0.35"/></filter></defs><g filter="url(#soft2)"><rect x="724.2" y="191.8" width="320" height="512" fill="#4a4a4a"/><rect x="725.6" y="191.8" width="320" height="512" fill="#2d2d2d"/><rect x="726.4" y="195.4" width="318" height="23.1" fill="#3a3a3a"/><rect x="726.4" y="218.5" width="318" height="458" fill="#474747"/><rect x="766.5" y="196" width="41.5" height="23" fill="#484848"/><rect x="1018" y="218.5" width="26" height="458" fill="#4b4b4b"/><rect x="1017.5" y="218.5" width="0.8" height="458" fill="#3c3c3c"/><text x="733.6" y="210.9" font-size="9.3" font-weight="bold" fill="#bcbcbc" textLength="31.5" lengthAdjust="spacingAndGlyphs">Appear</text><text x="772.7" y="210.9" font-size="9.3" font-weight="bold" fill="#f2f2f2" textLength="29" lengthAdjust="spacingAndGlyphs">Layers</text><text x="816" y="210.9" font-size="9.3" font-weight="bold" fill="#bcbcbc" textLength="31.5" lengthAdjust="spacingAndGlyphs">Gradier</text><text x="855" y="210.9" font-size="9.3" font-weight="bold" fill="#bcbcbc" textLength="33" lengthAdjust="spacingAndGlyphs">Brushe:</text><text x="894" y="210.9" font-size="9.3" font-weight="bold" fill="#bcbcbc" textLength="32" lengthAdjust="spacingAndGlyphs">Symbol</text><text x="933.5" y="210.9" font-size="9.3" font-weight="bold" fill="#bcbcbc" textLength="34" lengthAdjust="spacingAndGlyphs">Transpa</text><path d="M988.6,204.6 L991,207.3 L988.6,210 M992.6,204.6 L995,207.3 L992.6,210" fill="none" stroke="#a8a8a8" stroke-width="1.05"/><rect x="1002" y="202.5" width="1" height="9.5" fill="#8a8a8a"/><path d="M1008,204.2 H1017 M1008,207.4 H1017 M1008,210.6 H1017" stroke="#b8b8b8" stroke-width="1.1"/><rect x="730.5" y="224.2" width="286.5" height="16.6" fill="#46607f"/><path d="M1011.5,224.5 L1017,224.5 L1017,230.0 Z" fill="#e8e8e8"/><rect x="748.3" y="224.2" width="0.7" height="16.8" fill="#3d3d3d" opacity="0.35"/><rect x="985.6" y="224.2" width="0.7" height="16.8" fill="#3d3d3d" opacity="0.7"/><path d="M734.5,232.9 Q739.7,227.3 744.9000000000001,232.9 Q739.7,238.5 734.5,232.9 Z" fill="#cfcfcf"/><circle cx="739.7" cy="232.9" r="2.3" fill="#46607f"/><circle cx="739.7" cy="232.9" r="1.1" fill="#cfcfcf"/><rect x="767.5" y="224.0" width="3.2" height="16.900000000000002" fill="#f5a623"/><path d="M777.1999999999999,229.9 L780.4,233.1 L777.1999999999999,236.29999999999998" fill="none" stroke="#d8d8d8" stroke-width="1.1"/><g transform="translate(792.7,225.5)"><rect x="0" y="0" width="14" height="14.6" rx="1.6" fill="#f4f4f4" stroke="#1e1e1e" stroke-width="1"/></g><text x="811.6" y="236.4" font-size="9.4" fill="#ececec" stroke="#ececec" stroke-width="0.25" textLength="44.2" lengthAdjust="spacingAndGlyphs">Watermark</text><circle cx="995.9" cy="233.1" r="3.2" fill="none" stroke="#c6c6c6" stroke-width="1"/><rect x="730.5" y="241.1" width="286.5" height="0.9" fill="#3b3b3b"/><rect x="748.3" y="242.0" width="0.7" height="16.8" fill="#3d3d3d" opacity="0.35"/><rect x="985.6" y="242.0" width="0.7" height="16.8" fill="#3d3d3d" opacity="0.7"/><path d="M734.5,250.70000000000002 Q739.7,245.10000000000002 744.9000000000001,250.70000000000002 Q739.7,256.3 734.5,250.70000000000002 Z" fill="#cfcfcf"/><circle cx="739.7" cy="250.70000000000002" r="2.3" fill="#474747"/><circle cx="739.7" cy="250.70000000000002" r="1.1" fill="#cfcfcf"/><rect x="767.5" y="241.8" width="3.2" height="16.900000000000002" fill="#000000"/><path d="M777.1999999999999,247.70000000000002 L780.4,250.9 L777.1999999999999,254.1" fill="none" stroke="#d8d8d8" stroke-width="1.1"/><g transform="translate(792.7,243.3)"><rect x="0" y="0" width="14" height="14.6" rx="1.6" fill="#f4f4f4" stroke="#1e1e1e" stroke-width="1"/><ellipse cx="7" cy="5.4" rx="3.9" ry="3.9" fill="#d8dcdc" stroke="#6e7878" stroke-width="0.9"/><path d="M7,1.8 V9 M3.8,3.6 L10.2,7.2 M10.2,3.6 L3.8,7.2" stroke="#9aa" stroke-width="0.4"/><path d="M2.9,7.2 Q7,10.6 11.1,7.2 L10.8,11.2 Q7,14 3.2,11.2 Z" fill="#a8322e"/></g><text x="811.6" y="254.20000000000002" font-size="9.4" fill="#ececec" stroke="#ececec" stroke-width="0.25" textLength="15.2" lengthAdjust="spacingAndGlyphs">Top</text><circle cx="995.9" cy="250.9" r="3.2" fill="none" stroke="#c6c6c6" stroke-width="1"/><rect x="730.5" y="258.90000000000003" width="286.5" height="0.9" fill="#3b3b3b"/><rect x="748.3" y="259.8" width="0.7" height="16.8" fill="#3d3d3d" opacity="0.35"/><rect x="985.6" y="259.8" width="0.7" height="16.8" fill="#3d3d3d" opacity="0.7"/><path d="M734.5,268.5 Q739.7,262.9 744.9000000000001,268.5 Q739.7,274.1 734.5,268.5 Z" fill="#cfcfcf"/><circle cx="739.7" cy="268.5" r="2.3" fill="#474747"/><circle cx="739.7" cy="268.5" r="1.1" fill="#cfcfcf"/><rect x="767.5" y="259.6" width="3.2" height="16.900000000000002" fill="#4f4fe0"/><path d="M777.1999999999999,265.5 L780.4,268.7 L777.1999999999999,271.9" fill="none" stroke="#d8d8d8" stroke-width="1.1"/><g transform="translate(792.7,261.1)"><rect x="0" y="0" width="14" height="14.6" rx="1.6" fill="#f4f4f4" stroke="#1e1e1e" stroke-width="1"/><path d="M5,10 Q4.6,5 8.2,4.8 Q12,4.8 12.2,10.4 Z" fill="#f2f2f2" stroke="#777" stroke-width="0.8"/><path d="M8.4,4.9 Q7.2,7 7.2,10.2 M10.3,5.4 Q10.8,8 10.6,10.3" stroke="#999" stroke-width="0.5" fill="none"/><path d="M1.6,10.6 Q3,9.6 5.2,9.6 L8,10.8 Q4,11.8 1.6,11.4 Z" fill="#9a3a3a"/><path d="M5,10.4 L12.2,10.9" stroke="#555" stroke-width="0.7"/></g><text x="811.6" y="272.0" font-size="9.4" fill="#ececec" stroke="#ececec" stroke-width="0.25" textLength="15.4" lengthAdjust="spacingAndGlyphs">Left</text><circle cx="995.9" cy="268.7" r="3.2" fill="none" stroke="#c6c6c6" stroke-width="1"/><rect x="730.5" y="276.70000000000005" width="286.5" height="0.9" fill="#3b3b3b"/><rect x="748.3" y="277.6" width="0.7" height="16.8" fill="#3d3d3d" opacity="0.35"/><rect x="985.6" y="277.6" width="0.7" height="16.8" fill="#3d3d3d" opacity="0.7"/><path d="M734.5,286.3 Q739.7,280.7 744.9000000000001,286.3 Q739.7,291.90000000000003 734.5,286.3 Z" fill="#cfcfcf"/><circle cx="739.7" cy="286.3" r="2.3" fill="#474747"/><circle cx="739.7" cy="286.3" r="1.1" fill="#cfcfcf"/><rect x="767.5" y="277.40000000000003" width="3.2" height="16.900000000000002" fill="#3fd44a"/><path d="M777.1999999999999,283.3 L780.4,286.5 L777.1999999999999,289.7" fill="none" stroke="#d8d8d8" stroke-width="1.1"/><g transform="translate(792.7,278.90000000000003)"><rect x="0" y="0" width="14" height="14.6" rx="1.6" fill="#f4f4f4" stroke="#1e1e1e" stroke-width="1"/><g transform="translate(14,0) scale(-1,1)"><path d="M5,10 Q4.6,5 8.2,4.8 Q12,4.8 12.2,10.4 Z" fill="#f2f2f2" stroke="#777" stroke-width="0.8"/><path d="M8.4,4.9 Q7.2,7 7.2,10.2 M10.3,5.4 Q10.8,8 10.6,10.3" stroke="#999" stroke-width="0.5" fill="none"/><path d="M1.6,10.6 Q3,9.6 5.2,9.6 L8,10.8 Q4,11.8 1.6,11.4 Z" fill="#9a3a3a"/><path d="M5,10.4 L12.2,10.9" stroke="#555" stroke-width="0.7"/></g></g><text x="811.6" y="289.8" font-size="9.4" fill="#ececec" stroke="#ececec" stroke-width="0.25" textLength="21.5" lengthAdjust="spacingAndGlyphs">Right</text><circle cx="995.9" cy="286.5" r="3.2" fill="none" stroke="#c6c6c6" stroke-width="1"/><rect x="730.5" y="294.5" width="286.5" height="0.9" fill="#3b3b3b"/><rect x="748.3" y="295.4" width="0.7" height="16.8" fill="#3d3d3d" opacity="0.35"/><rect x="985.6" y="295.4" width="0.7" height="16.8" fill="#3d3d3d" opacity="0.7"/><path d="M734.5,304.09999999999997 Q739.7,298.49999999999994 744.9000000000001,304.09999999999997 Q739.7,309.7 734.5,304.09999999999997 Z" fill="#cfcfcf"/><circle cx="739.7" cy="304.09999999999997" r="2.3" fill="#474747"/><circle cx="739.7" cy="304.09999999999997" r="1.1" fill="#cfcfcf"/><rect x="767.5" y="295.2" width="3.2" height="16.900000000000002" fill="#3fd6d6"/><path d="M777.1999999999999,301.09999999999997 L780.4,304.29999999999995 L777.1999999999999,307.49999999999994" fill="none" stroke="#d8d8d8" stroke-width="1.1"/><g transform="translate(792.7,296.7)"><rect x="0" y="0" width="14" height="14.6" rx="1.6" fill="#f4f4f4" stroke="#1e1e1e" stroke-width="1"/><path d="M2.8,9.6 Q2.4,3.8 7,3.8 Q11.6,3.8 11.2,9.6 Z" fill="#f0f0f0" stroke="#555" stroke-width="1"/><path d="M5.4,4.2 Q4.6,7 4.8,9.8 M8.8,4.2 Q9.8,7 9.6,9.8" stroke="#888" stroke-width="0.5" fill="none"/><path d="M2.6,9.4 L11,10 L9.6,12 Q5,12.4 1.4,10.8 Z" fill="#a03c38"/></g><text x="811.6" y="307.59999999999997" font-size="9.4" fill="#ececec" stroke="#ececec" stroke-width="0.25" textLength="45.3" lengthAdjust="spacingAndGlyphs">Front (Left)</text><circle cx="995.9" cy="304.29999999999995" r="3.2" fill="none" stroke="#c6c6c6" stroke-width="1"/><rect x="730.5" y="312.3" width="286.5" height="0.9" fill="#3b3b3b"/><rect x="748.3" y="313.2" width="0.7" height="16.8" fill="#3d3d3d" opacity="0.35"/><rect x="985.6" y="313.2" width="0.7" height="16.8" fill="#3d3d3d" opacity="0.7"/><path d="M734.5,321.9 Q739.7,316.29999999999995 744.9000000000001,321.9 Q739.7,327.5 734.5,321.9 Z" fill="#cfcfcf"/><circle cx="739.7" cy="321.9" r="2.3" fill="#474747"/><circle cx="739.7" cy="321.9" r="1.1" fill="#cfcfcf"/><rect x="767.5" y="313.0" width="3.2" height="16.900000000000002" fill="#3fd6d6"/><path d="M777.1999999999999,318.9 L780.4,322.09999999999997 L777.1999999999999,325.29999999999995" fill="none" stroke="#d8d8d8" stroke-width="1.1"/><g transform="translate(792.7,314.5)"><rect x="0" y="0" width="14" height="14.6" rx="1.6" fill="#f4f4f4" stroke="#1e1e1e" stroke-width="1"/><path d="M2.8,9.6 Q2.4,3.8 7,3.8 Q11.6,3.8 11.2,9.6 Z" fill="#f0f0f0" stroke="#555" stroke-width="1"/><path d="M7,4 V9.8" stroke="#888" stroke-width="0.5"/><path d="M2,9.6 Q7,11.2 12,9.6 L12.4,11.6 Q7,13.2 1.6,11.6 Z" fill="#a03c38"/></g><text x="811.6" y="325.4" font-size="9.4" fill="#ececec" stroke="#ececec" stroke-width="0.25" textLength="21.5" lengthAdjust="spacingAndGlyphs">Front</text><circle cx="995.9" cy="322.09999999999997" r="3.2" fill="none" stroke="#c6c6c6" stroke-width="1"/><rect x="730.5" y="330.1" width="286.5" height="0.9" fill="#3b3b3b"/><rect x="748.3" y="331.0" width="0.7" height="16.8" fill="#3d3d3d" opacity="0.35"/><rect x="985.6" y="331.0" width="0.7" height="16.8" fill="#3d3d3d" opacity="0.7"/><path d="M734.5,339.7 Q739.7,334.09999999999997 744.9000000000001,339.7 Q739.7,345.3 734.5,339.7 Z" fill="#cfcfcf"/><circle cx="739.7" cy="339.7" r="2.3" fill="#474747"/><circle cx="739.7" cy="339.7" r="1.1" fill="#cfcfcf"/><rect x="767.5" y="330.8" width="3.2" height="16.900000000000002" fill="#e040d0"/><path d="M777.1999999999999,336.7 L780.4,339.9 L777.1999999999999,343.09999999999997" fill="none" stroke="#d8d8d8" stroke-width="1.1"/><g transform="translate(792.7,332.3)"><rect x="0" y="0" width="14" height="14.6" rx="1.6" fill="#f4f4f4" stroke="#1e1e1e" stroke-width="1"/><path d="M2.8,9.6 Q2.4,3.8 7,3.8 Q11.6,3.8 11.2,9.6 Z" fill="#f0f0f0" stroke="#555" stroke-width="1"/><path d="M5.2,4.2 Q4.2,7 4.4,9.8 M8.6,4.2 Q9.4,7 9.2,9.8" stroke="#888" stroke-width="0.5" fill="none"/><path d="M11.4,9.4 L3,10 L4.4,12 Q9,12.4 12.6,10.8 Z" fill="#a03c38"/></g><text x="811.6" y="343.2" font-size="9.4" fill="#ececec" stroke="#ececec" stroke-width="0.25" textLength="51.1" lengthAdjust="spacingAndGlyphs">Front (Right)</text><circle cx="995.9" cy="339.9" r="3.2" fill="none" stroke="#c6c6c6" stroke-width="1"/><rect x="730.5" y="347.90000000000003" width="286.5" height="0.9" fill="#3b3b3b"/><rect x="748.3" y="348.8" width="0.7" height="16.8" fill="#3d3d3d" opacity="0.35"/><rect x="985.6" y="348.8" width="0.7" height="16.8" fill="#3d3d3d" opacity="0.7"/><path d="M734.5,357.5 Q739.7,351.9 744.9000000000001,357.5 Q739.7,363.1 734.5,357.5 Z" fill="#cfcfcf"/><circle cx="739.7" cy="357.5" r="2.3" fill="#474747"/><circle cx="739.7" cy="357.5" r="1.1" fill="#cfcfcf"/><rect x="767.5" y="348.6" width="3.2" height="16.900000000000002" fill="#e8e83c"/><path d="M777.1999999999999,354.5 L780.4,357.7 L777.1999999999999,360.9" fill="none" stroke="#d8d8d8" stroke-width="1.1"/><g transform="translate(792.7,350.1)"><rect x="0" y="0" width="14" height="14.6" rx="1.6" fill="#f4f4f4" stroke="#1e1e1e" stroke-width="1"/><path d="M2.8,10.6 Q2.2,4 7,4 Q11.8,4 11.2,10.6 Q7,11.6 2.8,10.6 Z" fill="#f0f0f0" stroke="#777" stroke-width="0.9"/><path d="M7,4.2 V8.4" stroke="#999" stroke-width="0.5"/></g><text x="811.6" y="361.0" font-size="9.4" fill="#ececec" stroke="#ececec" stroke-width="0.25" textLength="50.1" lengthAdjust="spacingAndGlyphs">Back (Fitted)</text><circle cx="995.9" cy="357.7" r="3.2" fill="none" stroke="#c6c6c6" stroke-width="1"/><rect x="730.5" y="365.70000000000005" width="286.5" height="0.9" fill="#3b3b3b"/><rect x="748.3" y="366.6" width="0.7" height="16.8" fill="#3d3d3d" opacity="0.35"/><rect x="985.6" y="366.6" width="0.7" height="16.8" fill="#3d3d3d" opacity="0.7"/><path d="M734.5,375.3 Q739.7,369.7 744.9000000000001,375.3 Q739.7,380.90000000000003 734.5,375.3 Z" fill="#cfcfcf"/><circle cx="739.7" cy="375.3" r="2.3" fill="#474747"/><circle cx="739.7" cy="375.3" r="1.1" fill="#cfcfcf"/><rect x="767.5" y="366.40000000000003" width="3.2" height="16.900000000000002" fill="#8a8a8a"/><path d="M777.1999999999999,372.3 L780.4,375.5 L777.1999999999999,378.7" fill="none" stroke="#d8d8d8" stroke-width="1.1"/><g transform="translate(792.7,367.90000000000003)"><rect x="0" y="0" width="14" height="14.6" rx="1.6" fill="#f4f4f4" stroke="#1e1e1e" stroke-width="1"/><path d="M2.8,10.6 Q2.2,4 7,4 Q11.8,4 11.2,10.6 Q7,11.6 2.8,10.6 Z" fill="#f0f0f0" stroke="#777" stroke-width="0.9"/><path d="M7,4.2 V8.4" stroke="#999" stroke-width="0.5"/><path d="M5,10.8 Q5,8.4 7,8.4 Q9,8.4 9,10.8" fill="#fff" stroke="#888" stroke-width="0.5"/><path d="M5,10.6 H9" stroke="#8a3434" stroke-width="1.3"/></g><text x="811.6" y="378.8" font-size="9.4" fill="#ececec" stroke="#ececec" stroke-width="0.25" textLength="66.2" lengthAdjust="spacingAndGlyphs">Back (Snapback)</text><circle cx="995.9" cy="375.5" r="3.2" fill="none" stroke="#c6c6c6" stroke-width="1"/><rect x="730.5" y="383.5" width="286.5" height="0.9" fill="#3b3b3b"/><rect x="748.3" y="384.4" width="0.7" height="16.8" fill="#3d3d3d" opacity="0.35"/><rect x="985.6" y="384.4" width="0.7" height="16.8" fill="#3d3d3d" opacity="0.7"/><path d="M734.5,393.09999999999997 Q739.7,387.49999999999994 744.9000000000001,393.09999999999997 Q739.7,398.7 734.5,393.09999999999997 Z" fill="#cfcfcf"/><circle cx="739.7" cy="393.09999999999997" r="2.3" fill="#474747"/><circle cx="739.7" cy="393.09999999999997" r="1.1" fill="#cfcfcf"/><rect x="767.5" y="384.2" width="3.2" height="16.900000000000002" fill="#000000"/><path d="M777.1999999999999,390.09999999999997 L780.4,393.29999999999995 L777.1999999999999,396.49999999999994" fill="none" stroke="#d8d8d8" stroke-width="1.1"/><g transform="translate(792.7,385.7)"><rect x="0" y="0" width="14" height="14.6" rx="1.6" fill="#f4f4f4" stroke="#1e1e1e" stroke-width="1"/><path d="M2.8,10.6 Q2.2,4 7,4 Q11.8,4 11.2,10.6 Q7,11.6 2.8,10.6 Z" fill="#f0f0f0" stroke="#777" stroke-width="0.9"/><path d="M7,4.2 V8.4" stroke="#999" stroke-width="0.5"/><path d="M5,10.8 Q5,8.4 7,8.4 Q9,8.4 9,10.8" fill="#fff" stroke="#888" stroke-width="0.5"/><path d="M5,10.6 H9" stroke="#8a3434" stroke-width="1.3"/></g><text x="811.6" y="396.59999999999997" font-size="9.4" fill="#ececec" stroke="#ececec" stroke-width="0.25" textLength="67.8" lengthAdjust="spacingAndGlyphs">Back (Strapback)</text><circle cx="995.9" cy="393.29999999999995" r="3.2" fill="none" stroke="#c6c6c6" stroke-width="1"/><rect x="730.5" y="401.3" width="286.5" height="0.9" fill="#3b3b3b"/><rect x="748.3" y="402.2" width="0.7" height="16.8" fill="#3d3d3d" opacity="0.35"/><rect x="985.6" y="402.2" width="0.7" height="16.8" fill="#3d3d3d" opacity="0.7"/><path d="M734.5,410.9 Q739.7,405.29999999999995 744.9000000000001,410.9 Q739.7,416.5 734.5,410.9 Z" fill="#cfcfcf"/><circle cx="739.7" cy="410.9" r="2.3" fill="#474747"/><circle cx="739.7" cy="410.9" r="1.1" fill="#cfcfcf"/><rect x="767.5" y="402.0" width="3.2" height="16.900000000000002" fill="#4a78e0"/><path d="M777.1999999999999,407.9 L780.4,411.09999999999997 L777.1999999999999,414.29999999999995" fill="none" stroke="#d8d8d8" stroke-width="1.1"/><g transform="translate(792.7,403.5)"><rect x="0" y="0" width="14" height="14.6" rx="1.6" fill="#f4f4f4" stroke="#1e1e1e" stroke-width="1"/><path d="M2.8,10.6 Q2.2,4 7,4 Q11.8,4 11.2,10.6 Q7,11.6 2.8,10.6 Z" fill="#f0f0f0" stroke="#777" stroke-width="0.9"/><path d="M7,4.2 V8.4" stroke="#999" stroke-width="0.5"/><path d="M5,10.8 Q5,8.4 7,8.4 Q9,8.4 9,10.8" fill="#fff" stroke="#888" stroke-width="0.5"/><path d="M5,10.6 H9" stroke="#8a3434" stroke-width="1.3"/></g><text x="811.6" y="414.4" font-size="9.4" fill="#ececec" stroke="#ececec" stroke-width="0.25" textLength="72.9" lengthAdjust="spacingAndGlyphs">Back (Buckleback)</text><circle cx="995.9" cy="411.09999999999997" r="3.2" fill="none" stroke="#c6c6c6" stroke-width="1"/><rect x="730.5" y="419.1" width="286.5" height="0.9" fill="#3b3b3b"/><rect x="748.3" y="420.0" width="0.7" height="16.8" fill="#3d3d3d" opacity="0.35"/><rect x="985.6" y="420.0" width="0.7" height="16.8" fill="#3d3d3d" opacity="0.7"/><path d="M734.5,428.7 Q739.7,423.09999999999997 744.9000000000001,428.7 Q739.7,434.3 734.5,428.7 Z" fill="#cfcfcf"/><circle cx="739.7" cy="428.7" r="2.3" fill="#474747"/><circle cx="739.7" cy="428.7" r="1.1" fill="#cfcfcf"/><rect x="767.5" y="419.8" width="3.2" height="16.900000000000002" fill="#f0a020"/><path d="M777.1999999999999,425.7 L780.4,428.9 L777.1999999999999,432.09999999999997" fill="none" stroke="#d8d8d8" stroke-width="1.1"/><g transform="translate(792.7,421.3)"><rect x="0" y="0" width="14" height="14.6" rx="1.6" fill="#f4f4f4" stroke="#1e1e1e" stroke-width="1"/><path d="M3,7.4 Q2.8,1.8 7,1.8 Q11.2,1.8 11,7.4 Z" fill="#a83a3c"/><ellipse cx="7" cy="9" rx="4" ry="3.9" fill="#c4c4c4" stroke="#3a3a3a" stroke-width="1.2"/><path d="M7,5.3 V12.7 M3.8,7.2 L10.2,10.8 M10.2,7.2 L3.8,10.8" stroke="#5a5a5a" stroke-width="0.8"/></g><text x="811.6" y="432.2" font-size="9.4" fill="#ececec" stroke="#ececec" stroke-width="0.25" textLength="55.8" lengthAdjust="spacingAndGlyphs">Inside (Fitted)</text><circle cx="995.9" cy="428.9" r="3.2" fill="none" stroke="#c6c6c6" stroke-width="1"/><rect x="730.5" y="436.90000000000003" width="286.5" height="0.9" fill="#3b3b3b"/><rect x="748.3" y="437.8" width="0.7" height="16.8" fill="#3d3d3d" opacity="0.35"/><rect x="985.6" y="437.8" width="0.7" height="16.8" fill="#3d3d3d" opacity="0.7"/><path d="M734.5,446.5 Q739.7,440.9 744.9000000000001,446.5 Q739.7,452.1 734.5,446.5 Z" fill="#cfcfcf"/><circle cx="739.7" cy="446.5" r="2.3" fill="#474747"/><circle cx="739.7" cy="446.5" r="1.1" fill="#cfcfcf"/><rect x="767.5" y="437.6" width="3.2" height="16.900000000000002" fill="#c89a60"/><path d="M777.1999999999999,443.5 L780.4,446.7 L777.1999999999999,449.9" fill="none" stroke="#d8d8d8" stroke-width="1.1"/><g transform="translate(792.7,439.1)"><rect x="0" y="0" width="14" height="14.6" rx="1.6" fill="#f4f4f4" stroke="#1e1e1e" stroke-width="1"/><path d="M3,7.4 Q2.8,1.8 7,1.8 Q11.2,1.8 11,7.4 Z" fill="#a83a3c"/><ellipse cx="7" cy="9" rx="4" ry="3.9" fill="#c4c4c4" stroke="#3a3a3a" stroke-width="1.2"/><path d="M7,5.3 V12.7 M3.8,7.2 L10.2,10.8 M10.2,7.2 L3.8,10.8" stroke="#5a5a5a" stroke-width="0.8"/></g><text x="811.6" y="450.0" font-size="9.4" fill="#ececec" stroke="#ececec" stroke-width="0.25" textLength="71.6" lengthAdjust="spacingAndGlyphs">Inside (Snapback)</text><circle cx="995.9" cy="446.7" r="3.2" fill="none" stroke="#c6c6c6" stroke-width="1"/><rect x="730.5" y="454.70000000000005" width="286.5" height="0.9" fill="#3b3b3b"/><rect x="748.3" y="455.6" width="0.7" height="16.8" fill="#3d3d3d" opacity="0.35"/><rect x="985.6" y="455.6" width="0.7" height="16.8" fill="#3d3d3d" opacity="0.7"/><path d="M734.5,464.3 Q739.7,458.7 744.9000000000001,464.3 Q739.7,469.90000000000003 734.5,464.3 Z" fill="#cfcfcf"/><circle cx="739.7" cy="464.3" r="2.3" fill="#474747"/><circle cx="739.7" cy="464.3" r="1.1" fill="#cfcfcf"/><rect x="767.5" y="455.40000000000003" width="3.2" height="16.900000000000002" fill="#a0501e"/><path d="M777.1999999999999,461.3 L780.4,464.5 L777.1999999999999,467.7" fill="none" stroke="#d8d8d8" stroke-width="1.1"/><g transform="translate(792.7,456.90000000000003)"><rect x="0" y="0" width="14" height="14.6" rx="1.6" fill="#f4f4f4" stroke="#1e1e1e" stroke-width="1"/><path d="M3,7.4 Q2.8,1.8 7,1.8 Q11.2,1.8 11,7.4 Z" fill="#a83a3c"/><ellipse cx="7" cy="9" rx="4" ry="3.9" fill="#c4c4c4" stroke="#3a3a3a" stroke-width="1.2"/><path d="M7,5.3 V12.7 M3.8,7.2 L10.2,10.8 M10.2,7.2 L3.8,10.8" stroke="#5a5a5a" stroke-width="0.8"/></g><text x="811.6" y="467.8" font-size="9.4" fill="#ececec" stroke="#ececec" stroke-width="0.25" textLength="69.7" lengthAdjust="spacingAndGlyphs">Inside (Stapback)</text><circle cx="995.9" cy="464.5" r="3.2" fill="none" stroke="#c6c6c6" stroke-width="1"/><rect x="730.5" y="472.5" width="286.5" height="0.9" fill="#3b3b3b"/><rect x="748.3" y="473.4" width="0.7" height="16.8" fill="#3d3d3d" opacity="0.35"/><rect x="985.6" y="473.4" width="0.7" height="16.8" fill="#3d3d3d" opacity="0.7"/><path d="M734.5,482.09999999999997 Q739.7,476.49999999999994 744.9000000000001,482.09999999999997 Q739.7,487.7 734.5,482.09999999999997 Z" fill="#cfcfcf"/><circle cx="739.7" cy="482.09999999999997" r="2.3" fill="#474747"/><circle cx="739.7" cy="482.09999999999997" r="1.1" fill="#cfcfcf"/><rect x="767.5" y="473.2" width="3.2" height="16.900000000000002" fill="#4a78e0"/><path d="M777.1999999999999,479.09999999999997 L780.4,482.29999999999995 L777.1999999999999,485.49999999999994" fill="none" stroke="#d8d8d8" stroke-width="1.1"/><g transform="translate(792.7,474.7)"><rect x="0" y="0" width="14" height="14.6" rx="1.6" fill="#f4f4f4" stroke="#1e1e1e" stroke-width="1"/><path d="M3,7.4 Q2.8,1.8 7,1.8 Q11.2,1.8 11,7.4 Z" fill="#a83a3c"/><ellipse cx="7" cy="9" rx="4" ry="3.9" fill="#c4c4c4" stroke="#3a3a3a" stroke-width="1.2"/><path d="M7,5.3 V12.7 M3.8,7.2 L10.2,10.8 M10.2,7.2 L3.8,10.8" stroke="#5a5a5a" stroke-width="0.8"/></g><text x="811.6" y="485.59999999999997" font-size="9.4" fill="#ececec" stroke="#ececec" stroke-width="0.25" textLength="78.6" lengthAdjust="spacingAndGlyphs">Inside (Buckleback)</text><circle cx="995.9" cy="482.29999999999995" r="3.2" fill="none" stroke="#c6c6c6" stroke-width="1"/><rect x="726" y="659.3" width="292" height="0.8" fill="#3c3c3c"/><text x="730.8" y="671.6" font-size="9.4" fill="#d8d8d8" stroke="#d8d8d8" stroke-width="0.2">15 La...</text><path d="M883,664.1 H879 V672.6 H887.5 V668.6" fill="none" stroke="#cfcfcf" stroke-width="1.1"/><path d="M882.5,669.1 L888.5,663.1 M884.5,663.1 H888.5 V667.1" fill="none" stroke="#cfcfcf" stroke-width="1.1"/><circle cx="904.5" cy="666.9" r="2.6" fill="none" stroke="#6a6a6a" stroke-width="1.1"/><path d="M906.5,669.1 L909.7,672.5" stroke="#6a6a6a" stroke-width="1.3"/><rect x="923.0" y="663.5" width="6.6" height="6.6" fill="none" stroke="#cfcfcf" stroke-width="1"/><rect x="925.4" y="666.1" width="4" height="4" fill="#cfcfcf"/><rect x="925.8" y="666.5" width="6" height="6" fill="none" stroke="#8e8e8e" stroke-width="1"/><path d="M942,664.1 V667.6 H945.4 M944,665.8000000000001 L945.8,667.6 L944,669.4" fill="none" stroke="#cfcfcf" stroke-width="1"/><rect x="946.8" y="664.9" width="8" height="7" fill="none" stroke="#cfcfcf" stroke-width="1"/><path d="M950.8,666.3000000000001 V670.5 M948.7,668.4 H952.9" stroke="#cfcfcf" stroke-width="1"/><rect x="968.0" y="664.1" width="8.6" height="8.6" fill="none" stroke="#cfcfcf" stroke-width="1.1"/><path d="M972.3,666.1 V670.7 M970.0,668.4 H974.5999999999999" stroke="#cfcfcf" stroke-width="1.1"/><path d="M989.8,665.5 H998.2 M992.5,665.3000000000001 V663.8000000000001 H995.5 V665.3000000000001" fill="none" stroke="#cfcfcf" stroke-width="1"/><path d="M990.8,665.7 L991.4,672.7 H996.6 L997.2,665.7" fill="none" stroke="#cfcfcf" stroke-width="1"/><path d="M992.8,667.5 V670.9 M995.2,667.5 V670.9" stroke="#cfcfcf" stroke-width="0.8"/><rect x="724" y="676.3" width="320" height="2.2" fill="#2b2b2b"/><rect x="724" y="678.5" width="320" height="24.5" fill="#4a4a4a"/><path d="M865,680.5 H881" stroke="#333" stroke-width="2" stroke-dasharray="1.2,1.2"/></g></svg></body></html>
